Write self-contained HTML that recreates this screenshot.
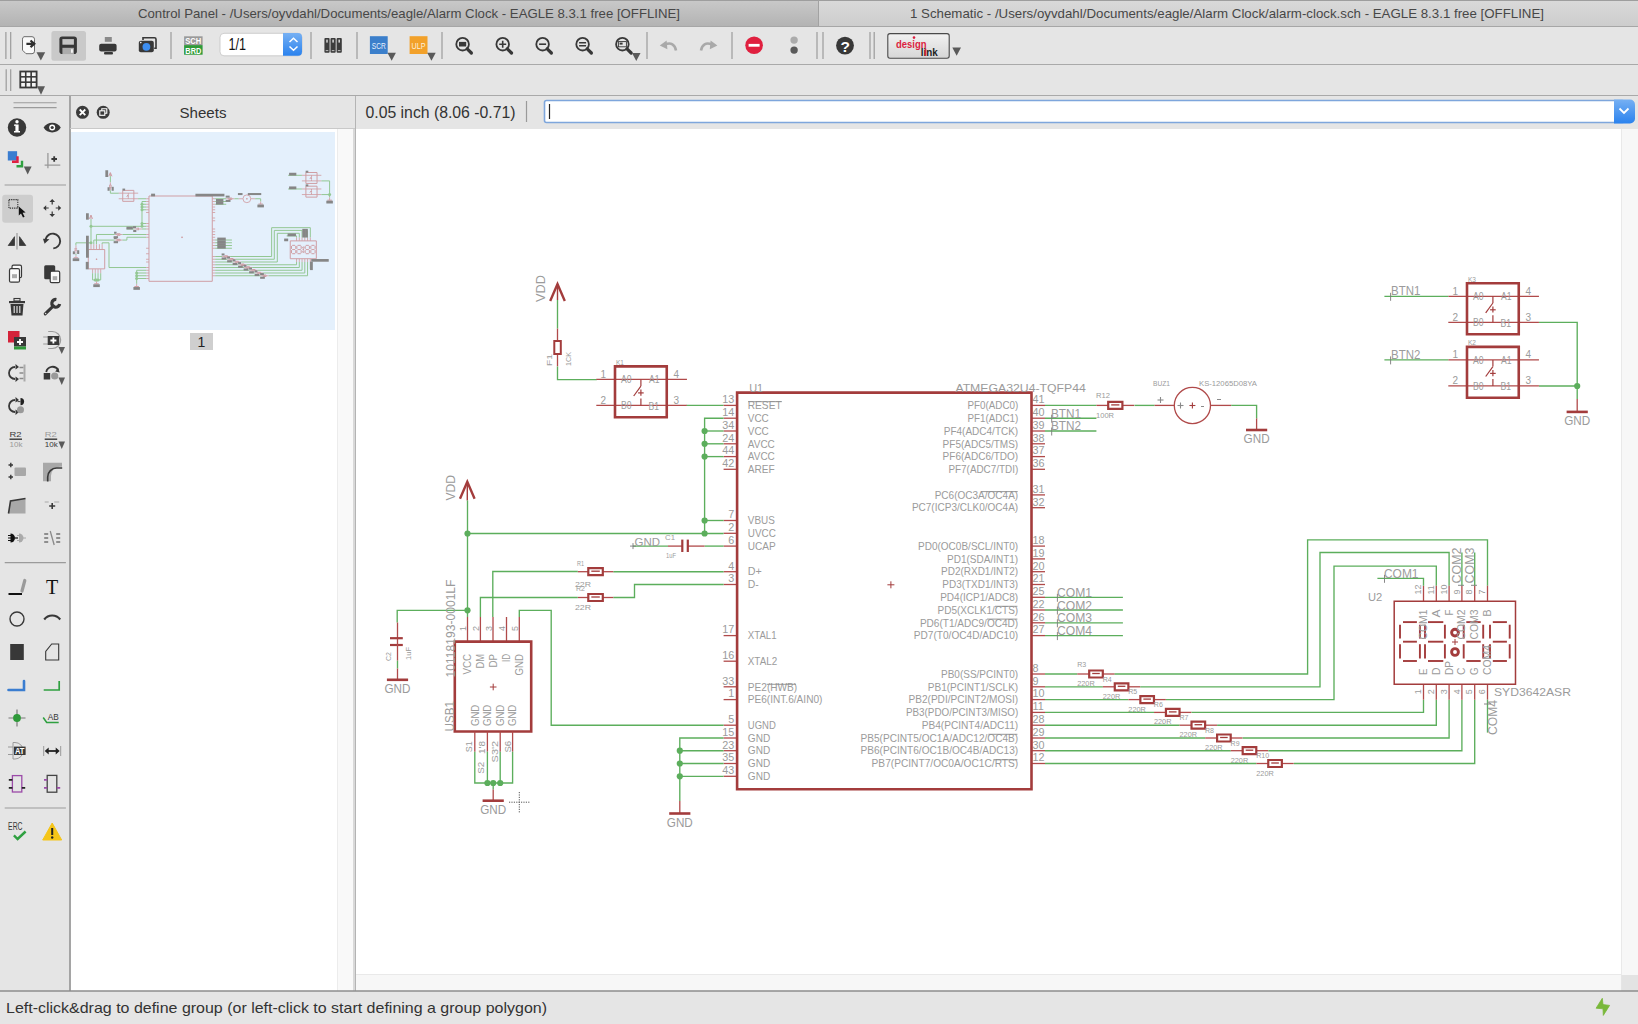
<!DOCTYPE html>
<html><head><meta charset="utf-8"><title>EAGLE</title>
<style>html,body{margin:0;padding:0;width:1638px;height:1024px;overflow:hidden;background:#e5e5e5}
svg{display:block} text{font-family:"Liberation Sans", sans-serif}
.p{opacity:var(--po,1)} .l{opacity:var(--lo,1)}
.thumb{--w:1px;--rc:#cf9ea4;--pc:#d4aab0;--gc:#93c793;--xc:none;--po:0;--lo:0;--jr:7px}</style></head>
<body><svg width="1638" height="1024" viewBox="0 0 1638 1024">
<defs><clipPath id="cv"><rect x="356" y="129" width="1265" height="845"/></clipPath>
<clipPath id="th"><rect x="71" y="132" width="265" height="198"/></clipPath>
<g id="sch">
<path d="M550.20 301.00 L557.50 284.00 L564.80 301.00" fill="none" style="stroke:var(--rc,#a33c3c);stroke-width:var(--w,2.4px)" vector-effect="non-scaling-stroke"/>
<line x1="557.50" y1="284.50" x2="557.50" y2="300.00" style="stroke:var(--rc,#a33c3c);stroke-width:var(--w,1.4px)" vector-effect="non-scaling-stroke"/>
<text class="l" x="545.00" y="302.00" font-size="12" fill="#9b9b9b" text-anchor="start" transform="rotate(-90 545.00 302.00)" textLength="27.0" lengthAdjust="spacingAndGlyphs">VDD</text>
<path d="M557.50 300.00 L557.50 328.60" fill="none" style="stroke:var(--gc,#5cae5c);stroke-width:var(--w,1.35px)" vector-effect="non-scaling-stroke"/>
<line x1="557.50" y1="328.60" x2="557.50" y2="341.00" style="stroke:var(--pc,#b04a4a);stroke-width:var(--w,1.3px)" vector-effect="non-scaling-stroke"/>
<line x1="557.50" y1="354.00" x2="557.50" y2="366.40" style="stroke:var(--pc,#b04a4a);stroke-width:var(--w,1.3px)" vector-effect="non-scaling-stroke"/>
<rect x="554.3" y="341" width="6.5" height="13" fill="none" style="stroke:var(--rc,#a33c3c);stroke-width:var(--w,2px)" vector-effect="non-scaling-stroke"/>
<path d="M557.50 366.40 L557.50 379.60 L596.80 379.60" fill="none" style="stroke:var(--gc,#5cae5c);stroke-width:var(--w,1.35px)" vector-effect="non-scaling-stroke"/>
<text class="l" x="552.00" y="366.00" font-size="7.5" fill="#9b9b9b" text-anchor="start" transform="rotate(-90 552.00 366.00)" textLength="12.0" lengthAdjust="spacingAndGlyphs">F1</text>
<text class="l" x="571.00" y="366.00" font-size="7.5" fill="#9b9b9b" text-anchor="start" transform="rotate(-90 571.00 366.00)" textLength="14.0" lengthAdjust="spacingAndGlyphs">1CK</text>
<line x1="596.30" y1="379.40" x2="686.95" y2="379.40" style="stroke:var(--pc,#b04a4a);stroke-width:var(--w,1.3px)" vector-effect="non-scaling-stroke"/>
<line x1="596.30" y1="405.40" x2="686.95" y2="405.40" style="stroke:var(--pc,#b04a4a);stroke-width:var(--w,1.3px)" vector-effect="non-scaling-stroke"/>
<rect x="615.00" y="366.40" width="51.75" height="50.90" fill="none" style="stroke:var(--rc,#a33c3c);stroke-width:var(--w,2.6px)" vector-effect="non-scaling-stroke"/>
<line x1="640.90" y1="379.40" x2="640.90" y2="386.10" style="stroke:var(--rc,#a33c3c);stroke-width:var(--w,1.2px)" vector-effect="non-scaling-stroke"/>
<line x1="640.90" y1="386.10" x2="633.70" y2="396.00" style="stroke:var(--rc,#a33c3c);stroke-width:var(--w,1.2px)" vector-effect="non-scaling-stroke"/>
<line x1="638.10" y1="392.90" x2="643.70" y2="392.90" style="stroke:var(--rc,#a33c3c);stroke-width:var(--w,1.2px)" vector-effect="non-scaling-stroke"/>
<line x1="640.90" y1="389.60" x2="640.90" y2="395.70" style="stroke:var(--rc,#a33c3c);stroke-width:var(--w,1.2px)" vector-effect="non-scaling-stroke"/>
<line x1="640.90" y1="398.40" x2="640.90" y2="405.40" style="stroke:var(--rc,#a33c3c);stroke-width:var(--w,1.2px)" vector-effect="non-scaling-stroke"/>
<text class="p" x="621.00" y="383.40" font-size="10" fill="#9b9b9b" text-anchor="start" textLength="10.5" lengthAdjust="spacingAndGlyphs">A0</text>
<text class="p" x="649.00" y="383.40" font-size="10" fill="#9b9b9b" text-anchor="start" textLength="10.5" lengthAdjust="spacingAndGlyphs">A1</text>
<text class="p" x="621.00" y="409.40" font-size="10" fill="#9b9b9b" text-anchor="start" textLength="10.5" lengthAdjust="spacingAndGlyphs">B0</text>
<text class="p" x="648.50" y="409.90" font-size="10" fill="#9b9b9b" text-anchor="start" textLength="10.5" lengthAdjust="spacingAndGlyphs">B1</text>
<text class="p" x="600.50" y="377.60" font-size="10" fill="#9b9b9b" text-anchor="start">1</text>
<text class="p" x="600.50" y="403.60" font-size="10" fill="#9b9b9b" text-anchor="start">2</text>
<text class="p" x="673.55" y="377.60" font-size="10" fill="#9b9b9b" text-anchor="start">4</text>
<text class="p" x="673.55" y="403.60" font-size="10" fill="#9b9b9b" text-anchor="start">3</text>
<text class="l" x="616.00" y="364.90" font-size="6.5" fill="#9b9b9b" text-anchor="start" textLength="8.0" lengthAdjust="spacingAndGlyphs">K1</text>
<path d="M686.70 405.40 L723.60 405.40" fill="none" style="stroke:var(--gc,#5cae5c);stroke-width:var(--w,1.35px)" vector-effect="non-scaling-stroke"/>
<line x1="723.60" y1="405.40" x2="737.10" y2="405.40" style="stroke:var(--pc,#b04a4a);stroke-width:var(--w,1.3px)" vector-effect="non-scaling-stroke"/>
<text class="p" x="734.30" y="403.20" font-size="10.8" fill="#9b9b9b" text-anchor="end">13</text>
<text class="p" x="747.80" y="409.10" font-size="10.3" fill="#9b9b9b" text-anchor="start" textLength="33.8" lengthAdjust="spacingAndGlyphs">RESET</text>
<line x1="723.60" y1="418.20" x2="737.10" y2="418.20" style="stroke:var(--pc,#b04a4a);stroke-width:var(--w,1.3px)" vector-effect="non-scaling-stroke"/>
<text class="p" x="734.30" y="416.00" font-size="10.8" fill="#9b9b9b" text-anchor="end">14</text>
<text class="p" x="747.80" y="421.90" font-size="10.3" fill="#9b9b9b" text-anchor="start" textLength="21.0" lengthAdjust="spacingAndGlyphs">VCC</text>
<line x1="723.60" y1="431.00" x2="737.10" y2="431.00" style="stroke:var(--pc,#b04a4a);stroke-width:var(--w,1.3px)" vector-effect="non-scaling-stroke"/>
<text class="p" x="734.30" y="428.80" font-size="10.8" fill="#9b9b9b" text-anchor="end">34</text>
<text class="p" x="747.80" y="434.70" font-size="10.3" fill="#9b9b9b" text-anchor="start" textLength="21.0" lengthAdjust="spacingAndGlyphs">VCC</text>
<line x1="723.60" y1="443.80" x2="737.10" y2="443.80" style="stroke:var(--pc,#b04a4a);stroke-width:var(--w,1.3px)" vector-effect="non-scaling-stroke"/>
<text class="p" x="734.30" y="441.60" font-size="10.8" fill="#9b9b9b" text-anchor="end">24</text>
<text class="p" x="747.80" y="447.50" font-size="10.3" fill="#9b9b9b" text-anchor="start" textLength="27.0" lengthAdjust="spacingAndGlyphs">AVCC</text>
<line x1="723.60" y1="456.60" x2="737.10" y2="456.60" style="stroke:var(--pc,#b04a4a);stroke-width:var(--w,1.3px)" vector-effect="non-scaling-stroke"/>
<text class="p" x="734.30" y="454.40" font-size="10.8" fill="#9b9b9b" text-anchor="end">44</text>
<text class="p" x="747.80" y="460.30" font-size="10.3" fill="#9b9b9b" text-anchor="start" textLength="27.0" lengthAdjust="spacingAndGlyphs">AVCC</text>
<line x1="723.60" y1="469.30" x2="737.10" y2="469.30" style="stroke:var(--pc,#b04a4a);stroke-width:var(--w,1.3px)" vector-effect="non-scaling-stroke"/>
<text class="p" x="734.30" y="467.10" font-size="10.8" fill="#9b9b9b" text-anchor="end">42</text>
<text class="p" x="747.80" y="473.00" font-size="10.3" fill="#9b9b9b" text-anchor="start" textLength="27.0" lengthAdjust="spacingAndGlyphs">AREF</text>
<line x1="723.60" y1="520.50" x2="737.10" y2="520.50" style="stroke:var(--pc,#b04a4a);stroke-width:var(--w,1.3px)" vector-effect="non-scaling-stroke"/>
<text class="p" x="734.30" y="518.30" font-size="10.8" fill="#9b9b9b" text-anchor="end">7</text>
<text class="p" x="747.80" y="524.20" font-size="10.3" fill="#9b9b9b" text-anchor="start" textLength="27.0" lengthAdjust="spacingAndGlyphs">VBUS</text>
<line x1="723.60" y1="533.30" x2="737.10" y2="533.30" style="stroke:var(--pc,#b04a4a);stroke-width:var(--w,1.3px)" vector-effect="non-scaling-stroke"/>
<text class="p" x="734.30" y="531.10" font-size="10.8" fill="#9b9b9b" text-anchor="end">2</text>
<text class="p" x="747.80" y="537.00" font-size="10.3" fill="#9b9b9b" text-anchor="start" textLength="28.0" lengthAdjust="spacingAndGlyphs">UVCC</text>
<line x1="723.60" y1="546.10" x2="737.10" y2="546.10" style="stroke:var(--pc,#b04a4a);stroke-width:var(--w,1.3px)" vector-effect="non-scaling-stroke"/>
<text class="p" x="734.30" y="543.90" font-size="10.8" fill="#9b9b9b" text-anchor="end">6</text>
<text class="p" x="747.80" y="549.80" font-size="10.3" fill="#9b9b9b" text-anchor="start" textLength="28.0" lengthAdjust="spacingAndGlyphs">UCAP</text>
<line x1="723.60" y1="571.70" x2="737.10" y2="571.70" style="stroke:var(--pc,#b04a4a);stroke-width:var(--w,1.3px)" vector-effect="non-scaling-stroke"/>
<text class="p" x="734.30" y="569.50" font-size="10.8" fill="#9b9b9b" text-anchor="end">4</text>
<text class="p" x="747.80" y="575.40" font-size="10.3" fill="#9b9b9b" text-anchor="start" textLength="14.0" lengthAdjust="spacingAndGlyphs">D+</text>
<line x1="723.60" y1="584.50" x2="737.10" y2="584.50" style="stroke:var(--pc,#b04a4a);stroke-width:var(--w,1.3px)" vector-effect="non-scaling-stroke"/>
<text class="p" x="734.30" y="582.30" font-size="10.8" fill="#9b9b9b" text-anchor="end">3</text>
<text class="p" x="747.80" y="588.20" font-size="10.3" fill="#9b9b9b" text-anchor="start" textLength="11.0" lengthAdjust="spacingAndGlyphs">D-</text>
<line x1="723.60" y1="635.60" x2="737.10" y2="635.60" style="stroke:var(--pc,#b04a4a);stroke-width:var(--w,1.3px)" vector-effect="non-scaling-stroke"/>
<text class="p" x="734.30" y="633.40" font-size="10.8" fill="#9b9b9b" text-anchor="end">17</text>
<text class="p" x="747.80" y="639.30" font-size="10.3" fill="#9b9b9b" text-anchor="start" textLength="28.8" lengthAdjust="spacingAndGlyphs">XTAL1</text>
<line x1="723.60" y1="661.20" x2="737.10" y2="661.20" style="stroke:var(--pc,#b04a4a);stroke-width:var(--w,1.3px)" vector-effect="non-scaling-stroke"/>
<text class="p" x="734.30" y="659.00" font-size="10.8" fill="#9b9b9b" text-anchor="end">16</text>
<text class="p" x="747.80" y="664.90" font-size="10.3" fill="#9b9b9b" text-anchor="start" textLength="29.4" lengthAdjust="spacingAndGlyphs">XTAL2</text>
<line x1="723.60" y1="686.80" x2="737.10" y2="686.80" style="stroke:var(--pc,#b04a4a);stroke-width:var(--w,1.3px)" vector-effect="non-scaling-stroke"/>
<text class="p" x="734.30" y="684.60" font-size="10.8" fill="#9b9b9b" text-anchor="end">33</text>
<text class="p" x="747.80" y="690.50" font-size="10.3" fill="#9b9b9b" text-anchor="start" textLength="49.4" lengthAdjust="spacingAndGlyphs">PE2(HWB)</text>
<line x1="723.60" y1="699.60" x2="737.10" y2="699.60" style="stroke:var(--pc,#b04a4a);stroke-width:var(--w,1.3px)" vector-effect="non-scaling-stroke"/>
<text class="p" x="734.30" y="697.40" font-size="10.8" fill="#9b9b9b" text-anchor="end">1</text>
<text class="p" x="747.80" y="703.30" font-size="10.3" fill="#9b9b9b" text-anchor="start" textLength="74.6" lengthAdjust="spacingAndGlyphs">PE6(INT.6/AIN0)</text>
<line x1="723.60" y1="725.20" x2="737.10" y2="725.20" style="stroke:var(--pc,#b04a4a);stroke-width:var(--w,1.3px)" vector-effect="non-scaling-stroke"/>
<text class="p" x="734.30" y="723.00" font-size="10.8" fill="#9b9b9b" text-anchor="end">5</text>
<text class="p" x="747.80" y="728.90" font-size="10.3" fill="#9b9b9b" text-anchor="start" textLength="28.0" lengthAdjust="spacingAndGlyphs">UGND</text>
<line x1="723.60" y1="738.00" x2="737.10" y2="738.00" style="stroke:var(--pc,#b04a4a);stroke-width:var(--w,1.3px)" vector-effect="non-scaling-stroke"/>
<text class="p" x="734.30" y="735.80" font-size="10.8" fill="#9b9b9b" text-anchor="end">15</text>
<text class="p" x="747.80" y="741.70" font-size="10.3" fill="#9b9b9b" text-anchor="start" textLength="22.4" lengthAdjust="spacingAndGlyphs">GND</text>
<line x1="723.60" y1="750.70" x2="737.10" y2="750.70" style="stroke:var(--pc,#b04a4a);stroke-width:var(--w,1.3px)" vector-effect="non-scaling-stroke"/>
<text class="p" x="734.30" y="748.50" font-size="10.8" fill="#9b9b9b" text-anchor="end">23</text>
<text class="p" x="747.80" y="754.40" font-size="10.3" fill="#9b9b9b" text-anchor="start" textLength="22.4" lengthAdjust="spacingAndGlyphs">GND</text>
<line x1="723.60" y1="763.50" x2="737.10" y2="763.50" style="stroke:var(--pc,#b04a4a);stroke-width:var(--w,1.3px)" vector-effect="non-scaling-stroke"/>
<text class="p" x="734.30" y="761.30" font-size="10.8" fill="#9b9b9b" text-anchor="end">35</text>
<text class="p" x="747.80" y="767.20" font-size="10.3" fill="#9b9b9b" text-anchor="start" textLength="22.4" lengthAdjust="spacingAndGlyphs">GND</text>
<line x1="723.60" y1="776.30" x2="737.10" y2="776.30" style="stroke:var(--pc,#b04a4a);stroke-width:var(--w,1.3px)" vector-effect="non-scaling-stroke"/>
<text class="p" x="734.30" y="774.10" font-size="10.8" fill="#9b9b9b" text-anchor="end">43</text>
<text class="p" x="747.80" y="780.00" font-size="10.3" fill="#9b9b9b" text-anchor="start" textLength="22.4" lengthAdjust="spacingAndGlyphs">GND</text>
<line x1="1031.50" y1="405.40" x2="1045.00" y2="405.40" style="stroke:var(--pc,#b04a4a);stroke-width:var(--w,1.3px)" vector-effect="non-scaling-stroke"/>
<text class="p" x="1032.60" y="403.20" font-size="10.8" fill="#9b9b9b" text-anchor="start">41</text>
<text class="p" x="1018.20" y="409.10" font-size="10.3" fill="#9b9b9b" text-anchor="end" textLength="50.7" lengthAdjust="spacingAndGlyphs">PF0(ADC0)</text>
<line x1="1031.50" y1="418.20" x2="1045.00" y2="418.20" style="stroke:var(--pc,#b04a4a);stroke-width:var(--w,1.3px)" vector-effect="non-scaling-stroke"/>
<text class="p" x="1032.60" y="416.00" font-size="10.8" fill="#9b9b9b" text-anchor="start">40</text>
<text class="p" x="1018.20" y="421.90" font-size="10.3" fill="#9b9b9b" text-anchor="end" textLength="50.7" lengthAdjust="spacingAndGlyphs">PF1(ADC1)</text>
<line x1="1031.50" y1="431.00" x2="1045.00" y2="431.00" style="stroke:var(--pc,#b04a4a);stroke-width:var(--w,1.3px)" vector-effect="non-scaling-stroke"/>
<text class="p" x="1032.60" y="428.80" font-size="10.8" fill="#9b9b9b" text-anchor="start">39</text>
<text class="p" x="1018.20" y="434.70" font-size="10.3" fill="#9b9b9b" text-anchor="end" textLength="74.4" lengthAdjust="spacingAndGlyphs">PF4(ADC4/TCK)</text>
<line x1="1031.50" y1="443.80" x2="1045.00" y2="443.80" style="stroke:var(--pc,#b04a4a);stroke-width:var(--w,1.3px)" vector-effect="non-scaling-stroke"/>
<text class="p" x="1032.60" y="441.60" font-size="10.8" fill="#9b9b9b" text-anchor="start">38</text>
<text class="p" x="1018.20" y="447.50" font-size="10.3" fill="#9b9b9b" text-anchor="end" textLength="75.6" lengthAdjust="spacingAndGlyphs">PF5(ADC5/TMS)</text>
<line x1="1031.50" y1="456.60" x2="1045.00" y2="456.60" style="stroke:var(--pc,#b04a4a);stroke-width:var(--w,1.3px)" vector-effect="non-scaling-stroke"/>
<text class="p" x="1032.60" y="454.40" font-size="10.8" fill="#9b9b9b" text-anchor="start">37</text>
<text class="p" x="1018.20" y="460.30" font-size="10.3" fill="#9b9b9b" text-anchor="end" textLength="75.6" lengthAdjust="spacingAndGlyphs">PF6(ADC6/TDO)</text>
<line x1="1031.50" y1="469.30" x2="1045.00" y2="469.30" style="stroke:var(--pc,#b04a4a);stroke-width:var(--w,1.3px)" vector-effect="non-scaling-stroke"/>
<text class="p" x="1032.60" y="467.10" font-size="10.8" fill="#9b9b9b" text-anchor="start">36</text>
<text class="p" x="1018.20" y="473.00" font-size="10.3" fill="#9b9b9b" text-anchor="end" textLength="69.7" lengthAdjust="spacingAndGlyphs">PF7(ADC7/TDI)</text>
<line x1="1031.50" y1="494.90" x2="1045.00" y2="494.90" style="stroke:var(--pc,#b04a4a);stroke-width:var(--w,1.3px)" vector-effect="non-scaling-stroke"/>
<text class="p" x="1032.60" y="492.70" font-size="10.8" fill="#9b9b9b" text-anchor="start">31</text>
<text class="p" x="1018.20" y="498.60" font-size="10.3" fill="#9b9b9b" text-anchor="end" textLength="83.5" lengthAdjust="spacingAndGlyphs">PC6(OC3A/OC4A)</text>
<line x1="1031.50" y1="507.70" x2="1045.00" y2="507.70" style="stroke:var(--pc,#b04a4a);stroke-width:var(--w,1.3px)" vector-effect="non-scaling-stroke"/>
<text class="p" x="1032.60" y="505.50" font-size="10.8" fill="#9b9b9b" text-anchor="start">32</text>
<text class="p" x="1018.20" y="511.40" font-size="10.3" fill="#9b9b9b" text-anchor="end" textLength="106.3" lengthAdjust="spacingAndGlyphs">PC7(ICP3/CLK0/OC4A)</text>
<line x1="1031.50" y1="546.10" x2="1045.00" y2="546.10" style="stroke:var(--pc,#b04a4a);stroke-width:var(--w,1.3px)" vector-effect="non-scaling-stroke"/>
<text class="p" x="1032.60" y="543.90" font-size="10.8" fill="#9b9b9b" text-anchor="start">18</text>
<text class="p" x="1018.20" y="549.80" font-size="10.3" fill="#9b9b9b" text-anchor="end" textLength="100.2" lengthAdjust="spacingAndGlyphs">PD0(OC0B/SCL/INT0)</text>
<line x1="1031.50" y1="558.90" x2="1045.00" y2="558.90" style="stroke:var(--pc,#b04a4a);stroke-width:var(--w,1.3px)" vector-effect="non-scaling-stroke"/>
<text class="p" x="1032.60" y="556.70" font-size="10.8" fill="#9b9b9b" text-anchor="start">19</text>
<text class="p" x="1018.20" y="562.60" font-size="10.3" fill="#9b9b9b" text-anchor="end" textLength="71.2" lengthAdjust="spacingAndGlyphs">PD1(SDA/INT1)</text>
<line x1="1031.50" y1="571.70" x2="1045.00" y2="571.70" style="stroke:var(--pc,#b04a4a);stroke-width:var(--w,1.3px)" vector-effect="non-scaling-stroke"/>
<text class="p" x="1032.60" y="569.50" font-size="10.8" fill="#9b9b9b" text-anchor="start">20</text>
<text class="p" x="1018.20" y="575.40" font-size="10.3" fill="#9b9b9b" text-anchor="end" textLength="77.2" lengthAdjust="spacingAndGlyphs">PD2(RXD1/INT2)</text>
<line x1="1031.50" y1="584.50" x2="1045.00" y2="584.50" style="stroke:var(--pc,#b04a4a);stroke-width:var(--w,1.3px)" vector-effect="non-scaling-stroke"/>
<text class="p" x="1032.60" y="582.30" font-size="10.8" fill="#9b9b9b" text-anchor="start">21</text>
<text class="p" x="1018.20" y="588.20" font-size="10.3" fill="#9b9b9b" text-anchor="end" textLength="75.9" lengthAdjust="spacingAndGlyphs">PD3(TXD1/INT3)</text>
<line x1="1031.50" y1="597.30" x2="1045.00" y2="597.30" style="stroke:var(--pc,#b04a4a);stroke-width:var(--w,1.3px)" vector-effect="non-scaling-stroke"/>
<text class="p" x="1032.60" y="595.10" font-size="10.8" fill="#9b9b9b" text-anchor="start">25</text>
<text class="p" x="1018.20" y="601.00" font-size="10.3" fill="#9b9b9b" text-anchor="end" textLength="78.0" lengthAdjust="spacingAndGlyphs">PD4(ICP1/ADC8)</text>
<line x1="1031.50" y1="610.00" x2="1045.00" y2="610.00" style="stroke:var(--pc,#b04a4a);stroke-width:var(--w,1.3px)" vector-effect="non-scaling-stroke"/>
<text class="p" x="1032.60" y="607.80" font-size="10.8" fill="#9b9b9b" text-anchor="start">22</text>
<text class="p" x="1018.20" y="613.70" font-size="10.3" fill="#9b9b9b" text-anchor="end" textLength="80.7" lengthAdjust="spacingAndGlyphs">PD5(XCLK1/CTS)</text>
<line x1="1031.50" y1="622.80" x2="1045.00" y2="622.80" style="stroke:var(--pc,#b04a4a);stroke-width:var(--w,1.3px)" vector-effect="non-scaling-stroke"/>
<text class="p" x="1032.60" y="620.60" font-size="10.8" fill="#9b9b9b" text-anchor="start">26</text>
<text class="p" x="1018.20" y="626.50" font-size="10.3" fill="#9b9b9b" text-anchor="end" textLength="98.3" lengthAdjust="spacingAndGlyphs">PD6(T1/ADC9/OC4D)</text>
<line x1="1031.50" y1="635.60" x2="1045.00" y2="635.60" style="stroke:var(--pc,#b04a4a);stroke-width:var(--w,1.3px)" vector-effect="non-scaling-stroke"/>
<text class="p" x="1032.60" y="633.40" font-size="10.8" fill="#9b9b9b" text-anchor="start">27</text>
<text class="p" x="1018.20" y="639.30" font-size="10.3" fill="#9b9b9b" text-anchor="end" textLength="104.4" lengthAdjust="spacingAndGlyphs">PD7(T0/OC4D/ADC10)</text>
<line x1="1031.50" y1="674.00" x2="1045.00" y2="674.00" style="stroke:var(--pc,#b04a4a);stroke-width:var(--w,1.3px)" vector-effect="non-scaling-stroke"/>
<text class="p" x="1032.60" y="671.80" font-size="10.8" fill="#9b9b9b" text-anchor="start">8</text>
<text class="p" x="1018.20" y="677.70" font-size="10.3" fill="#9b9b9b" text-anchor="end" textLength="77.2" lengthAdjust="spacingAndGlyphs">PB0(SS/PCINT0)</text>
<line x1="1031.50" y1="686.80" x2="1045.00" y2="686.80" style="stroke:var(--pc,#b04a4a);stroke-width:var(--w,1.3px)" vector-effect="non-scaling-stroke"/>
<text class="p" x="1032.60" y="684.60" font-size="10.8" fill="#9b9b9b" text-anchor="start">9</text>
<text class="p" x="1018.20" y="690.50" font-size="10.3" fill="#9b9b9b" text-anchor="end" textLength="90.4" lengthAdjust="spacingAndGlyphs">PB1(PCINT1/SCLK)</text>
<line x1="1031.50" y1="699.60" x2="1045.00" y2="699.60" style="stroke:var(--pc,#b04a4a);stroke-width:var(--w,1.3px)" vector-effect="non-scaling-stroke"/>
<text class="p" x="1032.60" y="697.40" font-size="10.8" fill="#9b9b9b" text-anchor="start">10</text>
<text class="p" x="1018.20" y="703.30" font-size="10.3" fill="#9b9b9b" text-anchor="end" textLength="109.7" lengthAdjust="spacingAndGlyphs">PB2(PDI/PCINT2/MOSI)</text>
<line x1="1031.50" y1="712.40" x2="1045.00" y2="712.40" style="stroke:var(--pc,#b04a4a);stroke-width:var(--w,1.3px)" vector-effect="non-scaling-stroke"/>
<text class="p" x="1032.60" y="710.20" font-size="10.8" fill="#9b9b9b" text-anchor="start">11</text>
<text class="p" x="1018.20" y="716.10" font-size="10.3" fill="#9b9b9b" text-anchor="end" textLength="112.3" lengthAdjust="spacingAndGlyphs">PB3(PDO/PCINT3/MISO)</text>
<line x1="1031.50" y1="725.20" x2="1045.00" y2="725.20" style="stroke:var(--pc,#b04a4a);stroke-width:var(--w,1.3px)" vector-effect="non-scaling-stroke"/>
<text class="p" x="1032.60" y="723.00" font-size="10.8" fill="#9b9b9b" text-anchor="start">28</text>
<text class="p" x="1018.20" y="728.90" font-size="10.3" fill="#9b9b9b" text-anchor="end" textLength="96.5" lengthAdjust="spacingAndGlyphs">PB4(PCINT4/ADC11)</text>
<line x1="1031.50" y1="738.00" x2="1045.00" y2="738.00" style="stroke:var(--pc,#b04a4a);stroke-width:var(--w,1.3px)" vector-effect="non-scaling-stroke"/>
<text class="p" x="1032.60" y="735.80" font-size="10.8" fill="#9b9b9b" text-anchor="start">29</text>
<text class="p" x="1018.20" y="741.70" font-size="10.3" fill="#9b9b9b" text-anchor="end" textLength="157.7" lengthAdjust="spacingAndGlyphs">PB5(PCINT5/OC1A/ADC12/OC4B)</text>
<line x1="1031.50" y1="750.70" x2="1045.00" y2="750.70" style="stroke:var(--pc,#b04a4a);stroke-width:var(--w,1.3px)" vector-effect="non-scaling-stroke"/>
<text class="p" x="1032.60" y="748.50" font-size="10.8" fill="#9b9b9b" text-anchor="start">30</text>
<text class="p" x="1018.20" y="754.40" font-size="10.3" fill="#9b9b9b" text-anchor="end" textLength="157.7" lengthAdjust="spacingAndGlyphs">PB6(PCINT6/OC1B/OC4B/ADC13)</text>
<line x1="1031.50" y1="763.50" x2="1045.00" y2="763.50" style="stroke:var(--pc,#b04a4a);stroke-width:var(--w,1.3px)" vector-effect="non-scaling-stroke"/>
<text class="p" x="1032.60" y="761.30" font-size="10.8" fill="#9b9b9b" text-anchor="start">12</text>
<text class="p" x="1018.20" y="767.20" font-size="10.3" fill="#9b9b9b" text-anchor="end" textLength="146.6" lengthAdjust="spacingAndGlyphs">PB7(PCINT7/OC0A/OC1C/RTS)</text>
<rect x="737.10" y="392.60" width="294.40" height="396.70" fill="none" style="stroke:var(--rc,#a33c3c);stroke-width:var(--w,2.6px)" vector-effect="non-scaling-stroke"/>
<text class="l" x="749.20" y="392.00" font-size="11.3" fill="#9b9b9b" text-anchor="start" textLength="14.0" lengthAdjust="spacingAndGlyphs">U1</text>
<text class="l" x="955.40" y="392.40" font-size="11.3" fill="#9b9b9b" text-anchor="start" textLength="130.4" lengthAdjust="spacingAndGlyphs">ATMEGA32U4-TQFP44</text>
<line x1="887.40" y1="584.80" x2="894.40" y2="584.80" style="stroke:var(--rc,#a33c3c);stroke-width:var(--w,1px)" vector-effect="non-scaling-stroke"/>
<line x1="890.90" y1="581.30" x2="890.90" y2="588.30" style="stroke:var(--rc,#a33c3c);stroke-width:var(--w,1px)" vector-effect="non-scaling-stroke"/>
<line x1="748.00" y1="401.70" x2="781.80" y2="401.70" style="stroke:var(--xc,#8d8d8d);stroke-width:var(--w,0.9px)" vector-effect="non-scaling-stroke"/>
<line x1="766.70" y1="684.30" x2="796.00" y2="684.30" style="stroke:var(--xc,#8d8d8d);stroke-width:var(--w,0.9px)" vector-effect="non-scaling-stroke"/>
<line x1="981.20" y1="491.60" x2="1017.70" y2="491.60" style="stroke:var(--xc,#8d8d8d);stroke-width:var(--w,0.9px)" vector-effect="non-scaling-stroke"/>
<line x1="995.00" y1="606.30" x2="1017.40" y2="606.30" style="stroke:var(--xc,#8d8d8d);stroke-width:var(--w,0.9px)" vector-effect="non-scaling-stroke"/>
<line x1="987.00" y1="619.10" x2="1017.40" y2="619.10" style="stroke:var(--xc,#8d8d8d);stroke-width:var(--w,0.9px)" vector-effect="non-scaling-stroke"/>
<line x1="988.40" y1="734.30" x2="1017.40" y2="734.30" style="stroke:var(--xc,#8d8d8d);stroke-width:var(--w,0.9px)" vector-effect="non-scaling-stroke"/>
<line x1="993.70" y1="759.80" x2="1017.40" y2="759.80" style="stroke:var(--xc,#8d8d8d);stroke-width:var(--w,0.9px)" vector-effect="non-scaling-stroke"/>
<path d="M723.60 418.20 L704.60 418.20 L704.60 533.30" fill="none" style="stroke:var(--gc,#5cae5c);stroke-width:var(--w,1.35px)" vector-effect="non-scaling-stroke"/>
<path d="M704.60 431.00 L723.60 431.00" fill="none" style="stroke:var(--gc,#5cae5c);stroke-width:var(--w,1.35px)" vector-effect="non-scaling-stroke"/>
<circle cx="704.60" cy="431.00" r="3.1" style="fill:var(--gc,#5cae5c);r:var(--jr,3.1px)"/>
<path d="M704.60 443.80 L723.60 443.80" fill="none" style="stroke:var(--gc,#5cae5c);stroke-width:var(--w,1.35px)" vector-effect="non-scaling-stroke"/>
<circle cx="704.60" cy="443.80" r="3.1" style="fill:var(--gc,#5cae5c);r:var(--jr,3.1px)"/>
<path d="M704.60 456.60 L723.60 456.60" fill="none" style="stroke:var(--gc,#5cae5c);stroke-width:var(--w,1.35px)" vector-effect="non-scaling-stroke"/>
<circle cx="704.60" cy="456.60" r="3.1" style="fill:var(--gc,#5cae5c);r:var(--jr,3.1px)"/>
<path d="M704.60 520.50 L723.60 520.50" fill="none" style="stroke:var(--gc,#5cae5c);stroke-width:var(--w,1.35px)" vector-effect="non-scaling-stroke"/>
<circle cx="704.60" cy="520.50" r="3.1" style="fill:var(--gc,#5cae5c);r:var(--jr,3.1px)"/>
<path d="M467.50 533.50 L723.60 533.50" fill="none" style="stroke:var(--gc,#5cae5c);stroke-width:var(--w,1.35px)" vector-effect="non-scaling-stroke"/>
<circle cx="704.60" cy="533.50" r="3.1" style="fill:var(--gc,#5cae5c);r:var(--jr,3.1px)"/>
<circle cx="467.50" cy="533.50" r="3.1" style="fill:var(--gc,#5cae5c);r:var(--jr,3.1px)"/>
<path d="M704.60 546.10 L723.60 546.10" fill="none" style="stroke:var(--gc,#5cae5c);stroke-width:var(--w,1.35px)" vector-effect="non-scaling-stroke"/>
<line x1="668.00" y1="546.10" x2="682.30" y2="546.10" style="stroke:var(--pc,#b04a4a);stroke-width:var(--w,1.3px)" vector-effect="non-scaling-stroke"/>
<line x1="687.80" y1="546.10" x2="704.60" y2="546.10" style="stroke:var(--pc,#b04a4a);stroke-width:var(--w,1.3px)" vector-effect="non-scaling-stroke"/>
<line x1="682.30" y1="539.60" x2="682.30" y2="552.00" style="stroke:var(--rc,#a33c3c);stroke-width:var(--w,2.2px)" vector-effect="non-scaling-stroke"/>
<line x1="687.80" y1="539.60" x2="687.80" y2="552.00" style="stroke:var(--rc,#a33c3c);stroke-width:var(--w,2.2px)" vector-effect="non-scaling-stroke"/>
<path d="M633.00 546.10 L668.00 546.10" fill="none" style="stroke:var(--gc,#5cae5c);stroke-width:var(--w,1.35px)" vector-effect="non-scaling-stroke"/>
<text class="l" x="634.50" y="545.80" font-size="11.5" fill="#9b9b9b" text-anchor="start" textLength="25.5" lengthAdjust="spacingAndGlyphs">GND</text>
<line x1="630.00" y1="546.10" x2="636.00" y2="546.10" style="stroke:var(--xc,#7a7a7a);stroke-width:var(--w,0.9px)" vector-effect="non-scaling-stroke"/>
<line x1="633.00" y1="543.10" x2="633.00" y2="549.10" style="stroke:var(--xc,#7a7a7a);stroke-width:var(--w,0.9px)" vector-effect="non-scaling-stroke"/>
<text class="l" x="665.00" y="540.00" font-size="7" fill="#9b9b9b" text-anchor="start" textLength="10.0" lengthAdjust="spacingAndGlyphs">C1</text>
<text class="l" x="666.00" y="558.00" font-size="7" fill="#9b9b9b" text-anchor="start" textLength="10.0" lengthAdjust="spacingAndGlyphs">1uF</text>
<path d="M723.60 571.70 L613.30 571.70" fill="none" style="stroke:var(--gc,#5cae5c);stroke-width:var(--w,1.35px)" vector-effect="non-scaling-stroke"/>
<line x1="577.80" y1="571.70" x2="588.30" y2="571.70" style="stroke:var(--pc,#b04a4a);stroke-width:var(--w,1.3px)" vector-effect="non-scaling-stroke"/>
<line x1="602.80" y1="571.70" x2="613.30" y2="571.70" style="stroke:var(--pc,#b04a4a);stroke-width:var(--w,1.3px)" vector-effect="non-scaling-stroke"/>
<rect x="588.30" y="568.20" width="14.50" height="7.00" fill="none" style="stroke:var(--rc,#a33c3c);stroke-width:var(--w,2.2px)" vector-effect="non-scaling-stroke"/>
<line x1="591.30" y1="571.20" x2="599.80" y2="571.20" style="stroke:var(--rc,#a33c3c);stroke-width:var(--w,1.3px)" vector-effect="non-scaling-stroke"/>
<path d="M577.80 571.50 L492.80 571.50 L492.80 617.00" fill="none" style="stroke:var(--gc,#5cae5c);stroke-width:var(--w,1.35px)" vector-effect="non-scaling-stroke"/>
<text class="l" x="577.00" y="566.00" font-size="7" fill="#9b9b9b" text-anchor="start" textLength="7.0" lengthAdjust="spacingAndGlyphs">R1</text>
<text class="l" x="575.00" y="587.00" font-size="7.5" fill="#9b9b9b" text-anchor="start" textLength="16.0" lengthAdjust="spacingAndGlyphs">22R</text>
<path d="M723.60 584.50 L634.50 584.50 L634.50 597.50 L613.30 597.50" fill="none" style="stroke:var(--gc,#5cae5c);stroke-width:var(--w,1.35px)" vector-effect="non-scaling-stroke"/>
<line x1="577.80" y1="597.50" x2="588.30" y2="597.50" style="stroke:var(--pc,#b04a4a);stroke-width:var(--w,1.3px)" vector-effect="non-scaling-stroke"/>
<line x1="602.80" y1="597.50" x2="613.30" y2="597.50" style="stroke:var(--pc,#b04a4a);stroke-width:var(--w,1.3px)" vector-effect="non-scaling-stroke"/>
<rect x="588.30" y="594.00" width="14.50" height="7.00" fill="none" style="stroke:var(--rc,#a33c3c);stroke-width:var(--w,2.2px)" vector-effect="non-scaling-stroke"/>
<line x1="591.30" y1="597.00" x2="599.80" y2="597.00" style="stroke:var(--rc,#a33c3c);stroke-width:var(--w,1.3px)" vector-effect="non-scaling-stroke"/>
<path d="M577.80 597.50 L480.40 597.50 L480.40 617.00" fill="none" style="stroke:var(--gc,#5cae5c);stroke-width:var(--w,1.35px)" vector-effect="non-scaling-stroke"/>
<text class="l" x="576.00" y="590.50" font-size="7" fill="#9b9b9b" text-anchor="start" textLength="9.0" lengthAdjust="spacingAndGlyphs">R2</text>
<text class="l" x="575.00" y="610.00" font-size="7.5" fill="#9b9b9b" text-anchor="start" textLength="16.0" lengthAdjust="spacingAndGlyphs">22R</text>
<path d="M460.00 498.70 L467.30 481.70 L474.60 498.70" fill="none" style="stroke:var(--rc,#a33c3c);stroke-width:var(--w,2.4px)" vector-effect="non-scaling-stroke"/>
<line x1="467.30" y1="482.20" x2="467.30" y2="500.40" style="stroke:var(--rc,#a33c3c);stroke-width:var(--w,1.4px)" vector-effect="non-scaling-stroke"/>
<text class="l" x="455.00" y="500.50" font-size="12" fill="#9b9b9b" text-anchor="start" transform="rotate(-90 455.00 500.50)" textLength="25.5" lengthAdjust="spacingAndGlyphs">VDD</text>
<path d="M467.50 500.40 L467.50 617.00" fill="none" style="stroke:var(--gc,#5cae5c);stroke-width:var(--w,1.35px)" vector-effect="non-scaling-stroke"/>
<circle cx="467.50" cy="610.30" r="3.1" style="fill:var(--gc,#5cae5c);r:var(--jr,3.1px)"/>
<path d="M467.50 610.30 L397.20 610.30 L397.20 622.50" fill="none" style="stroke:var(--gc,#5cae5c);stroke-width:var(--w,1.35px)" vector-effect="non-scaling-stroke"/>
<path d="M519.30 617.00 L519.30 610.30 L551.20 610.30 L551.20 725.20 L723.60 725.20" fill="none" style="stroke:var(--gc,#5cae5c);stroke-width:var(--w,1.35px)" vector-effect="non-scaling-stroke"/>
<line x1="467.50" y1="617.00" x2="467.50" y2="641.60" style="stroke:var(--pc,#b04a4a);stroke-width:var(--w,1.3px)" vector-effect="non-scaling-stroke"/>
<line x1="480.40" y1="617.00" x2="480.40" y2="641.60" style="stroke:var(--pc,#b04a4a);stroke-width:var(--w,1.3px)" vector-effect="non-scaling-stroke"/>
<line x1="493.00" y1="617.00" x2="493.00" y2="641.60" style="stroke:var(--pc,#b04a4a);stroke-width:var(--w,1.3px)" vector-effect="non-scaling-stroke"/>
<line x1="506.50" y1="617.00" x2="506.50" y2="641.60" style="stroke:var(--pc,#b04a4a);stroke-width:var(--w,1.3px)" vector-effect="non-scaling-stroke"/>
<line x1="519.30" y1="617.00" x2="519.30" y2="641.60" style="stroke:var(--pc,#b04a4a);stroke-width:var(--w,1.3px)" vector-effect="non-scaling-stroke"/>
<text class="p" x="466.00" y="631.00" font-size="9" fill="#9b9b9b" text-anchor="start" transform="rotate(-90 466.00 631.00)">1</text>
<text class="p" x="478.90" y="631.00" font-size="9" fill="#9b9b9b" text-anchor="start" transform="rotate(-90 478.90 631.00)">2</text>
<text class="p" x="491.50" y="631.00" font-size="9" fill="#9b9b9b" text-anchor="start" transform="rotate(-90 491.50 631.00)">3</text>
<text class="p" x="505.00" y="631.00" font-size="9" fill="#9b9b9b" text-anchor="start" transform="rotate(-90 505.00 631.00)">4</text>
<text class="p" x="517.80" y="631.00" font-size="9" fill="#9b9b9b" text-anchor="start" transform="rotate(-90 517.80 631.00)">5</text>
<rect x="454.80" y="641.60" width="76.40" height="89.90" fill="none" style="stroke:var(--rc,#a33c3c);stroke-width:var(--w,2.6px)" vector-effect="non-scaling-stroke"/>
<text class="p" x="471.20" y="654.00" font-size="10" fill="#9b9b9b" text-anchor="end" transform="rotate(-90 471.20 654.00)" textLength="20.5" lengthAdjust="spacingAndGlyphs">VCC</text>
<text class="p" x="484.10" y="654.00" font-size="10" fill="#9b9b9b" text-anchor="end" transform="rotate(-90 484.10 654.00)" textLength="14.5" lengthAdjust="spacingAndGlyphs">DM</text>
<text class="p" x="496.70" y="654.00" font-size="10" fill="#9b9b9b" text-anchor="end" transform="rotate(-90 496.70 654.00)" textLength="13.5" lengthAdjust="spacingAndGlyphs">DP</text>
<text class="p" x="510.20" y="654.00" font-size="10" fill="#9b9b9b" text-anchor="end" transform="rotate(-90 510.20 654.00)" textLength="8.0" lengthAdjust="spacingAndGlyphs">ID</text>
<text class="p" x="523.00" y="654.00" font-size="10" fill="#9b9b9b" text-anchor="end" transform="rotate(-90 523.00 654.00)" textLength="21.5" lengthAdjust="spacingAndGlyphs">GND</text>
<text class="p" x="478.50" y="726.00" font-size="10" fill="#9b9b9b" text-anchor="start" transform="rotate(-90 478.50 726.00)" textLength="21.3" lengthAdjust="spacingAndGlyphs">GND</text>
<line x1="474.80" y1="731.50" x2="474.80" y2="751.70" style="stroke:var(--pc,#b04a4a);stroke-width:var(--w,1.3px)" vector-effect="non-scaling-stroke"/>
<text class="p" x="491.10" y="726.00" font-size="10" fill="#9b9b9b" text-anchor="start" transform="rotate(-90 491.10 726.00)" textLength="21.3" lengthAdjust="spacingAndGlyphs">GND</text>
<line x1="487.40" y1="731.50" x2="487.40" y2="751.70" style="stroke:var(--pc,#b04a4a);stroke-width:var(--w,1.3px)" vector-effect="non-scaling-stroke"/>
<text class="p" x="503.90" y="726.00" font-size="10" fill="#9b9b9b" text-anchor="start" transform="rotate(-90 503.90 726.00)" textLength="21.3" lengthAdjust="spacingAndGlyphs">GND</text>
<line x1="500.20" y1="731.50" x2="500.20" y2="751.70" style="stroke:var(--pc,#b04a4a);stroke-width:var(--w,1.3px)" vector-effect="non-scaling-stroke"/>
<text class="p" x="516.30" y="726.00" font-size="10" fill="#9b9b9b" text-anchor="start" transform="rotate(-90 516.30 726.00)" textLength="21.3" lengthAdjust="spacingAndGlyphs">GND</text>
<line x1="512.60" y1="731.50" x2="512.60" y2="751.70" style="stroke:var(--pc,#b04a4a);stroke-width:var(--w,1.3px)" vector-effect="non-scaling-stroke"/>
<line x1="489.90" y1="687.00" x2="496.50" y2="687.00" style="stroke:var(--rc,#a33c3c);stroke-width:var(--w,1px)" vector-effect="non-scaling-stroke"/>
<line x1="493.20" y1="683.70" x2="493.20" y2="690.30" style="stroke:var(--rc,#a33c3c);stroke-width:var(--w,1px)" vector-effect="non-scaling-stroke"/>
<text class="l" x="455.00" y="677.50" font-size="12" fill="#9b9b9b" text-anchor="start" transform="rotate(-90 455.00 677.50)" textLength="98.0" lengthAdjust="spacingAndGlyphs">10118193-0001LF</text>
<text class="l" x="454.00" y="731.50" font-size="12" fill="#9b9b9b" text-anchor="start" transform="rotate(-90 454.00 731.50)" textLength="30.4" lengthAdjust="spacingAndGlyphs">USB1</text>
<text class="p" x="472.20" y="752.20" font-size="9" fill="#9b9b9b" text-anchor="start" transform="rotate(-90 472.20 752.20)" textLength="11.0" lengthAdjust="spacingAndGlyphs">S1</text>
<text class="p" x="484.50" y="754.00" font-size="9" fill="#9b9b9b" text-anchor="start" transform="rotate(-90 484.50 754.00)" textLength="13.0" lengthAdjust="spacingAndGlyphs">1'8</text>
<text class="p" x="484.50" y="773.80" font-size="9" fill="#9b9b9b" text-anchor="start" transform="rotate(-90 484.50 773.80)" textLength="12.0" lengthAdjust="spacingAndGlyphs">S2</text>
<text class="p" x="498.00" y="762.40" font-size="9" fill="#9b9b9b" text-anchor="start" transform="rotate(-90 498.00 762.40)" textLength="21.6" lengthAdjust="spacingAndGlyphs">S3'2</text>
<text class="p" x="511.50" y="752.60" font-size="9" fill="#9b9b9b" text-anchor="start" transform="rotate(-90 511.50 752.60)" textLength="11.8" lengthAdjust="spacingAndGlyphs">S6</text>
<path d="M474.80 751.70 L474.80 783.00 L512.60 783.00 L512.60 751.70" fill="none" style="stroke:var(--gc,#5cae5c);stroke-width:var(--w,1.35px)" vector-effect="non-scaling-stroke"/>
<path d="M487.40 751.70 L487.40 783.00" fill="none" style="stroke:var(--gc,#5cae5c);stroke-width:var(--w,1.35px)" vector-effect="non-scaling-stroke"/>
<path d="M500.20 751.70 L500.20 783.00" fill="none" style="stroke:var(--gc,#5cae5c);stroke-width:var(--w,1.35px)" vector-effect="non-scaling-stroke"/>
<circle cx="487.40" cy="783.00" r="3.1" style="fill:var(--gc,#5cae5c);r:var(--jr,3.1px)"/>
<circle cx="493.20" cy="783.00" r="3.1" style="fill:var(--gc,#5cae5c);r:var(--jr,3.1px)"/>
<circle cx="500.20" cy="783.00" r="3.1" style="fill:var(--gc,#5cae5c);r:var(--jr,3.1px)"/>
<path d="M493.20 783.00 L493.20 789.60" fill="none" style="stroke:var(--gc,#5cae5c);stroke-width:var(--w,1.35px)" vector-effect="non-scaling-stroke"/>
<line x1="493.20" y1="789.60" x2="493.20" y2="800.70" style="stroke:var(--pc,#b04a4a);stroke-width:var(--w,1.3px)" vector-effect="non-scaling-stroke"/>
<line x1="482.60" y1="800.70" x2="503.80" y2="800.70" style="stroke:var(--rc,#a33c3c);stroke-width:var(--w,2.6px)" vector-effect="non-scaling-stroke"/>
<text class="l" x="493.20" y="814.00" font-size="12" fill="#9b9b9b" text-anchor="middle" textLength="26.0" lengthAdjust="spacingAndGlyphs">GND</text>
<path d="M509 802.2 h21 M519.3 792 v21" style="stroke:var(--xc,#555);stroke-width:var(--w,1px)" stroke-dasharray="1.2 1.2"/>
<line x1="397.50" y1="622.50" x2="397.50" y2="638.20" style="stroke:var(--pc,#b04a4a);stroke-width:var(--w,1.3px)" vector-effect="non-scaling-stroke"/>
<line x1="390.00" y1="638.20" x2="402.80" y2="638.20" style="stroke:var(--rc,#a33c3c);stroke-width:var(--w,2.2px)" vector-effect="non-scaling-stroke"/>
<line x1="390.00" y1="645.00" x2="402.80" y2="645.00" style="stroke:var(--rc,#a33c3c);stroke-width:var(--w,2.2px)" vector-effect="non-scaling-stroke"/>
<line x1="397.50" y1="645.00" x2="397.50" y2="660.70" style="stroke:var(--pc,#b04a4a);stroke-width:var(--w,1.3px)" vector-effect="non-scaling-stroke"/>
<path d="M397.50 660.70 L397.50 668.50" fill="none" style="stroke:var(--gc,#5cae5c);stroke-width:var(--w,1.35px)" vector-effect="non-scaling-stroke"/>
<line x1="397.50" y1="668.50" x2="397.50" y2="679.80" style="stroke:var(--pc,#b04a4a);stroke-width:var(--w,1.3px)" vector-effect="non-scaling-stroke"/>
<line x1="386.90" y1="679.80" x2="408.10" y2="679.80" style="stroke:var(--rc,#a33c3c);stroke-width:var(--w,2.6px)" vector-effect="non-scaling-stroke"/>
<text class="l" x="397.50" y="693.10" font-size="12" fill="#9b9b9b" text-anchor="middle" textLength="26.0" lengthAdjust="spacingAndGlyphs">GND</text>
<text class="l" x="390.50" y="661.00" font-size="7.5" fill="#9b9b9b" text-anchor="start" transform="rotate(-90 390.50 661.00)" textLength="9.0" lengthAdjust="spacingAndGlyphs">C2</text>
<line x1="397.50" y1="638.20" x2="397.50" y2="645.00" style="stroke:var(--pc,#b04a4a);stroke-width:var(--w,1.3px)" vector-effect="non-scaling-stroke"/>
<text class="l" x="410.50" y="660.00" font-size="7.5" fill="#9b9b9b" text-anchor="start" transform="rotate(-90 410.50 660.00)" textLength="13.0" lengthAdjust="spacingAndGlyphs">1uF</text>
<path d="M723.60 738.00 L679.80 738.00 L679.80 801.00" fill="none" style="stroke:var(--gc,#5cae5c);stroke-width:var(--w,1.35px)" vector-effect="non-scaling-stroke"/>
<path d="M679.80 750.70 L723.60 750.70" fill="none" style="stroke:var(--gc,#5cae5c);stroke-width:var(--w,1.35px)" vector-effect="non-scaling-stroke"/>
<circle cx="679.80" cy="750.70" r="3.1" style="fill:var(--gc,#5cae5c);r:var(--jr,3.1px)"/>
<path d="M679.80 763.50 L723.60 763.50" fill="none" style="stroke:var(--gc,#5cae5c);stroke-width:var(--w,1.35px)" vector-effect="non-scaling-stroke"/>
<circle cx="679.80" cy="763.50" r="3.1" style="fill:var(--gc,#5cae5c);r:var(--jr,3.1px)"/>
<path d="M679.80 776.30 L723.60 776.30" fill="none" style="stroke:var(--gc,#5cae5c);stroke-width:var(--w,1.35px)" vector-effect="non-scaling-stroke"/>
<circle cx="679.80" cy="776.30" r="3.1" style="fill:var(--gc,#5cae5c);r:var(--jr,3.1px)"/>
<line x1="679.80" y1="801.00" x2="679.80" y2="813.50" style="stroke:var(--pc,#b04a4a);stroke-width:var(--w,1.3px)" vector-effect="non-scaling-stroke"/>
<line x1="669.20" y1="813.50" x2="690.40" y2="813.50" style="stroke:var(--rc,#a33c3c);stroke-width:var(--w,2.6px)" vector-effect="non-scaling-stroke"/>
<text class="l" x="679.80" y="826.80" font-size="12" fill="#9b9b9b" text-anchor="middle" textLength="26.0" lengthAdjust="spacingAndGlyphs">GND</text>
<path d="M1045.00 405.40 L1096.40 405.40" fill="none" style="stroke:var(--gc,#5cae5c);stroke-width:var(--w,1.35px)" vector-effect="non-scaling-stroke"/>
<line x1="1096.40" y1="405.40" x2="1108.20" y2="405.40" style="stroke:var(--pc,#b04a4a);stroke-width:var(--w,1.3px)" vector-effect="non-scaling-stroke"/>
<line x1="1122.40" y1="405.40" x2="1134.20" y2="405.40" style="stroke:var(--pc,#b04a4a);stroke-width:var(--w,1.3px)" vector-effect="non-scaling-stroke"/>
<rect x="1108.20" y="401.90" width="14.20" height="7.00" fill="none" style="stroke:var(--rc,#a33c3c);stroke-width:var(--w,2.2px)" vector-effect="non-scaling-stroke"/>
<line x1="1111.20" y1="404.90" x2="1119.40" y2="404.90" style="stroke:var(--rc,#a33c3c);stroke-width:var(--w,1.3px)" vector-effect="non-scaling-stroke"/>
<path d="M1134.50 405.40 L1154.60 405.40" fill="none" style="stroke:var(--gc,#5cae5c);stroke-width:var(--w,1.35px)" vector-effect="non-scaling-stroke"/>
<line x1="1154.60" y1="405.40" x2="1174.30" y2="405.40" style="stroke:var(--pc,#b04a4a);stroke-width:var(--w,1.3px)" vector-effect="non-scaling-stroke"/>
<circle cx="1192.4" cy="405.5" r="18.1" fill="none" style="stroke:var(--pc,#b04a4a);stroke-width:var(--w,1.3px)" vector-effect="non-scaling-stroke"/>
<line x1="1210.50" y1="405.40" x2="1231.20" y2="405.40" style="stroke:var(--pc,#b04a4a);stroke-width:var(--w,1.3px)" vector-effect="non-scaling-stroke"/>
<path d="M1231.20 405.40 L1256.60 405.40 L1256.60 418.40" fill="none" style="stroke:var(--gc,#5cae5c);stroke-width:var(--w,1.35px)" vector-effect="non-scaling-stroke"/>
<line x1="1256.60" y1="418.40" x2="1256.60" y2="430.00" style="stroke:var(--pc,#b04a4a);stroke-width:var(--w,1.3px)" vector-effect="non-scaling-stroke"/>
<line x1="1246.00" y1="430.00" x2="1267.20" y2="430.00" style="stroke:var(--rc,#a33c3c);stroke-width:var(--w,2.6px)" vector-effect="non-scaling-stroke"/>
<text class="l" x="1256.60" y="443.30" font-size="12" fill="#9b9b9b" text-anchor="middle" textLength="26.0" lengthAdjust="spacingAndGlyphs">GND</text>
<text class="l" x="1096.00" y="398.00" font-size="7" fill="#9b9b9b" text-anchor="start" textLength="14.0" lengthAdjust="spacingAndGlyphs">R12</text>
<text class="l" x="1096.00" y="418.00" font-size="7" fill="#9b9b9b" text-anchor="start" textLength="18.0" lengthAdjust="spacingAndGlyphs">100R</text>
<text class="l" x="1153.00" y="386.00" font-size="7" fill="#9b9b9b" text-anchor="start" textLength="17.0" lengthAdjust="spacingAndGlyphs">BUZ1</text>
<text class="l" x="1199.00" y="386.00" font-size="7" fill="#9b9b9b" text-anchor="start" textLength="58.0" lengthAdjust="spacingAndGlyphs">KS-12065D08YA</text>
<line x1="1157.50" y1="400.00" x2="1163.50" y2="400.00" style="stroke:var(--xc,#8a8a8a);stroke-width:var(--w,1.1px)" vector-effect="non-scaling-stroke"/>
<line x1="1160.50" y1="397.00" x2="1160.50" y2="403.00" style="stroke:var(--xc,#8a8a8a);stroke-width:var(--w,1.1px)" vector-effect="non-scaling-stroke"/>
<line x1="1217.00" y1="399.50" x2="1221.00" y2="399.50" style="stroke:var(--xc,#8a8a8a);stroke-width:var(--w,1px)" vector-effect="non-scaling-stroke"/>
<line x1="1177.50" y1="405.50" x2="1183.50" y2="405.50" style="stroke:var(--xc,#8a8a8a);stroke-width:var(--w,1.1px)" vector-effect="non-scaling-stroke"/>
<line x1="1180.50" y1="402.50" x2="1180.50" y2="408.50" style="stroke:var(--xc,#8a8a8a);stroke-width:var(--w,1.1px)" vector-effect="non-scaling-stroke"/>
<line x1="1189.40" y1="405.50" x2="1195.40" y2="405.50" style="stroke:var(--rc,#a33c3c);stroke-width:var(--w,1.1px)" vector-effect="non-scaling-stroke"/>
<line x1="1192.40" y1="402.50" x2="1192.40" y2="408.50" style="stroke:var(--rc,#a33c3c);stroke-width:var(--w,1.1px)" vector-effect="non-scaling-stroke"/>
<line x1="1201.00" y1="406.50" x2="1204.00" y2="406.50" style="stroke:var(--xc,#8a8a8a);stroke-width:var(--w,1px)" vector-effect="non-scaling-stroke"/>
<path d="M1045.00 418.20 L1096.40 418.20" fill="none" style="stroke:var(--gc,#5cae5c);stroke-width:var(--w,1.35px)" vector-effect="non-scaling-stroke"/>
<path d="M1045.00 431.00 L1096.40 431.00" fill="none" style="stroke:var(--gc,#5cae5c);stroke-width:var(--w,1.35px)" vector-effect="non-scaling-stroke"/>
<text class="l" x="1051.00" y="417.50" font-size="12" fill="#9b9b9b" text-anchor="start" textLength="30.0" lengthAdjust="spacingAndGlyphs">BTN1</text>
<line x1="1051.70" y1="414.70" x2="1051.70" y2="422.70" style="stroke:var(--xc,#7a7a7a);stroke-width:var(--w,0.9px)" vector-effect="non-scaling-stroke"/>
<text class="l" x="1051.00" y="430.30" font-size="12" fill="#9b9b9b" text-anchor="start" textLength="30.0" lengthAdjust="spacingAndGlyphs">BTN2</text>
<line x1="1051.70" y1="427.50" x2="1051.70" y2="435.50" style="stroke:var(--xc,#7a7a7a);stroke-width:var(--w,0.9px)" vector-effect="non-scaling-stroke"/>
<path d="M1045.00 597.30 L1122.90 597.30" fill="none" style="stroke:var(--gc,#5cae5c);stroke-width:var(--w,1.35px)" vector-effect="non-scaling-stroke"/>
<text class="l" x="1057.00" y="596.80" font-size="12" fill="#9b9b9b" text-anchor="start" textLength="35.0" lengthAdjust="spacingAndGlyphs">COM1</text>
<line x1="1057.40" y1="593.80" x2="1057.40" y2="601.80" style="stroke:var(--xc,#7a7a7a);stroke-width:var(--w,0.9px)" vector-effect="non-scaling-stroke"/>
<path d="M1045.00 610.00 L1122.90 610.00" fill="none" style="stroke:var(--gc,#5cae5c);stroke-width:var(--w,1.35px)" vector-effect="non-scaling-stroke"/>
<text class="l" x="1057.00" y="609.50" font-size="12" fill="#9b9b9b" text-anchor="start" textLength="35.0" lengthAdjust="spacingAndGlyphs">COM2</text>
<line x1="1057.40" y1="606.50" x2="1057.40" y2="614.50" style="stroke:var(--xc,#7a7a7a);stroke-width:var(--w,0.9px)" vector-effect="non-scaling-stroke"/>
<path d="M1045.00 622.80 L1122.90 622.80" fill="none" style="stroke:var(--gc,#5cae5c);stroke-width:var(--w,1.35px)" vector-effect="non-scaling-stroke"/>
<text class="l" x="1057.00" y="622.30" font-size="12" fill="#9b9b9b" text-anchor="start" textLength="35.0" lengthAdjust="spacingAndGlyphs">COM3</text>
<line x1="1057.40" y1="619.30" x2="1057.40" y2="627.30" style="stroke:var(--xc,#7a7a7a);stroke-width:var(--w,0.9px)" vector-effect="non-scaling-stroke"/>
<path d="M1045.00 635.60 L1122.90 635.60" fill="none" style="stroke:var(--gc,#5cae5c);stroke-width:var(--w,1.35px)" vector-effect="non-scaling-stroke"/>
<text class="l" x="1057.00" y="635.10" font-size="12" fill="#9b9b9b" text-anchor="start" textLength="35.0" lengthAdjust="spacingAndGlyphs">COM4</text>
<line x1="1057.40" y1="632.10" x2="1057.40" y2="640.10" style="stroke:var(--xc,#7a7a7a);stroke-width:var(--w,0.9px)" vector-effect="non-scaling-stroke"/>
<path d="M1045.00 674.00 L1077.30 674.00" fill="none" style="stroke:var(--gc,#5cae5c);stroke-width:var(--w,1.35px)" vector-effect="non-scaling-stroke"/>
<line x1="1077.30" y1="674.00" x2="1089.20" y2="674.00" style="stroke:var(--pc,#b04a4a);stroke-width:var(--w,1.3px)" vector-effect="non-scaling-stroke"/>
<line x1="1102.80" y1="674.00" x2="1114.70" y2="674.00" style="stroke:var(--pc,#b04a4a);stroke-width:var(--w,1.3px)" vector-effect="non-scaling-stroke"/>
<rect x="1089.20" y="670.50" width="13.60" height="7.00" fill="none" style="stroke:var(--rc,#a33c3c);stroke-width:var(--w,2.2px)" vector-effect="non-scaling-stroke"/>
<line x1="1092.20" y1="673.50" x2="1099.80" y2="673.50" style="stroke:var(--rc,#a33c3c);stroke-width:var(--w,1.3px)" vector-effect="non-scaling-stroke"/>
<text class="l" x="1077.20" y="686.00" font-size="7.5" fill="#9b9b9b" text-anchor="start" textLength="17.5" lengthAdjust="spacingAndGlyphs">220R</text>
<text class="l" x="1077.20" y="667.00" font-size="7" fill="#9b9b9b" text-anchor="start" textLength="9.0" lengthAdjust="spacingAndGlyphs">R3</text>
<text class="l" x="1102.70" y="681.50" font-size="7" fill="#9b9b9b" text-anchor="start" textLength="9.0" lengthAdjust="spacingAndGlyphs">R4</text>
<path d="M1045.00 686.80 L1102.88 686.80" fill="none" style="stroke:var(--gc,#5cae5c);stroke-width:var(--w,1.35px)" vector-effect="non-scaling-stroke"/>
<line x1="1102.88" y1="686.80" x2="1114.78" y2="686.80" style="stroke:var(--pc,#b04a4a);stroke-width:var(--w,1.3px)" vector-effect="non-scaling-stroke"/>
<line x1="1128.38" y1="686.80" x2="1140.28" y2="686.80" style="stroke:var(--pc,#b04a4a);stroke-width:var(--w,1.3px)" vector-effect="non-scaling-stroke"/>
<rect x="1114.78" y="683.30" width="13.60" height="7.00" fill="none" style="stroke:var(--rc,#a33c3c);stroke-width:var(--w,2.2px)" vector-effect="non-scaling-stroke"/>
<line x1="1117.78" y1="686.30" x2="1125.38" y2="686.30" style="stroke:var(--rc,#a33c3c);stroke-width:var(--w,1.3px)" vector-effect="non-scaling-stroke"/>
<text class="l" x="1102.78" y="698.80" font-size="7.5" fill="#9b9b9b" text-anchor="start" textLength="17.5" lengthAdjust="spacingAndGlyphs">220R</text>
<text class="l" x="1128.28" y="694.30" font-size="7" fill="#9b9b9b" text-anchor="start" textLength="9.0" lengthAdjust="spacingAndGlyphs">R5</text>
<path d="M1045.00 699.60 L1128.46 699.60" fill="none" style="stroke:var(--gc,#5cae5c);stroke-width:var(--w,1.35px)" vector-effect="non-scaling-stroke"/>
<line x1="1128.46" y1="699.60" x2="1140.36" y2="699.60" style="stroke:var(--pc,#b04a4a);stroke-width:var(--w,1.3px)" vector-effect="non-scaling-stroke"/>
<line x1="1153.96" y1="699.60" x2="1165.86" y2="699.60" style="stroke:var(--pc,#b04a4a);stroke-width:var(--w,1.3px)" vector-effect="non-scaling-stroke"/>
<rect x="1140.36" y="696.10" width="13.60" height="7.00" fill="none" style="stroke:var(--rc,#a33c3c);stroke-width:var(--w,2.2px)" vector-effect="non-scaling-stroke"/>
<line x1="1143.36" y1="699.10" x2="1150.96" y2="699.10" style="stroke:var(--rc,#a33c3c);stroke-width:var(--w,1.3px)" vector-effect="non-scaling-stroke"/>
<text class="l" x="1128.36" y="711.60" font-size="7.5" fill="#9b9b9b" text-anchor="start" textLength="17.5" lengthAdjust="spacingAndGlyphs">220R</text>
<text class="l" x="1153.86" y="707.10" font-size="7" fill="#9b9b9b" text-anchor="start" textLength="9.0" lengthAdjust="spacingAndGlyphs">R6</text>
<path d="M1045.00 712.40 L1154.04 712.40" fill="none" style="stroke:var(--gc,#5cae5c);stroke-width:var(--w,1.35px)" vector-effect="non-scaling-stroke"/>
<line x1="1154.04" y1="712.40" x2="1165.94" y2="712.40" style="stroke:var(--pc,#b04a4a);stroke-width:var(--w,1.3px)" vector-effect="non-scaling-stroke"/>
<line x1="1179.54" y1="712.40" x2="1191.44" y2="712.40" style="stroke:var(--pc,#b04a4a);stroke-width:var(--w,1.3px)" vector-effect="non-scaling-stroke"/>
<rect x="1165.94" y="708.90" width="13.60" height="7.00" fill="none" style="stroke:var(--rc,#a33c3c);stroke-width:var(--w,2.2px)" vector-effect="non-scaling-stroke"/>
<line x1="1168.94" y1="711.90" x2="1176.54" y2="711.90" style="stroke:var(--rc,#a33c3c);stroke-width:var(--w,1.3px)" vector-effect="non-scaling-stroke"/>
<text class="l" x="1153.94" y="724.40" font-size="7.5" fill="#9b9b9b" text-anchor="start" textLength="17.5" lengthAdjust="spacingAndGlyphs">220R</text>
<text class="l" x="1179.44" y="719.90" font-size="7" fill="#9b9b9b" text-anchor="start" textLength="9.0" lengthAdjust="spacingAndGlyphs">R7</text>
<path d="M1045.00 725.20 L1179.62 725.20" fill="none" style="stroke:var(--gc,#5cae5c);stroke-width:var(--w,1.35px)" vector-effect="non-scaling-stroke"/>
<line x1="1179.62" y1="725.20" x2="1191.52" y2="725.20" style="stroke:var(--pc,#b04a4a);stroke-width:var(--w,1.3px)" vector-effect="non-scaling-stroke"/>
<line x1="1205.12" y1="725.20" x2="1217.02" y2="725.20" style="stroke:var(--pc,#b04a4a);stroke-width:var(--w,1.3px)" vector-effect="non-scaling-stroke"/>
<rect x="1191.52" y="721.70" width="13.60" height="7.00" fill="none" style="stroke:var(--rc,#a33c3c);stroke-width:var(--w,2.2px)" vector-effect="non-scaling-stroke"/>
<line x1="1194.52" y1="724.70" x2="1202.12" y2="724.70" style="stroke:var(--rc,#a33c3c);stroke-width:var(--w,1.3px)" vector-effect="non-scaling-stroke"/>
<text class="l" x="1179.52" y="737.20" font-size="7.5" fill="#9b9b9b" text-anchor="start" textLength="17.5" lengthAdjust="spacingAndGlyphs">220R</text>
<text class="l" x="1205.02" y="732.70" font-size="7" fill="#9b9b9b" text-anchor="start" textLength="9.0" lengthAdjust="spacingAndGlyphs">R8</text>
<path d="M1045.00 738.00 L1205.20 738.00" fill="none" style="stroke:var(--gc,#5cae5c);stroke-width:var(--w,1.35px)" vector-effect="non-scaling-stroke"/>
<line x1="1205.20" y1="738.00" x2="1217.10" y2="738.00" style="stroke:var(--pc,#b04a4a);stroke-width:var(--w,1.3px)" vector-effect="non-scaling-stroke"/>
<line x1="1230.70" y1="738.00" x2="1242.60" y2="738.00" style="stroke:var(--pc,#b04a4a);stroke-width:var(--w,1.3px)" vector-effect="non-scaling-stroke"/>
<rect x="1217.10" y="734.50" width="13.60" height="7.00" fill="none" style="stroke:var(--rc,#a33c3c);stroke-width:var(--w,2.2px)" vector-effect="non-scaling-stroke"/>
<line x1="1220.10" y1="737.50" x2="1227.70" y2="737.50" style="stroke:var(--rc,#a33c3c);stroke-width:var(--w,1.3px)" vector-effect="non-scaling-stroke"/>
<text class="l" x="1205.10" y="750.00" font-size="7.5" fill="#9b9b9b" text-anchor="start" textLength="17.5" lengthAdjust="spacingAndGlyphs">220R</text>
<text class="l" x="1230.60" y="745.50" font-size="7" fill="#9b9b9b" text-anchor="start" textLength="9.0" lengthAdjust="spacingAndGlyphs">R9</text>
<path d="M1045.00 750.70 L1230.78 750.70" fill="none" style="stroke:var(--gc,#5cae5c);stroke-width:var(--w,1.35px)" vector-effect="non-scaling-stroke"/>
<line x1="1230.78" y1="750.70" x2="1242.68" y2="750.70" style="stroke:var(--pc,#b04a4a);stroke-width:var(--w,1.3px)" vector-effect="non-scaling-stroke"/>
<line x1="1256.28" y1="750.70" x2="1268.18" y2="750.70" style="stroke:var(--pc,#b04a4a);stroke-width:var(--w,1.3px)" vector-effect="non-scaling-stroke"/>
<rect x="1242.68" y="747.20" width="13.60" height="7.00" fill="none" style="stroke:var(--rc,#a33c3c);stroke-width:var(--w,2.2px)" vector-effect="non-scaling-stroke"/>
<line x1="1245.68" y1="750.20" x2="1253.28" y2="750.20" style="stroke:var(--rc,#a33c3c);stroke-width:var(--w,1.3px)" vector-effect="non-scaling-stroke"/>
<text class="l" x="1230.68" y="762.70" font-size="7.5" fill="#9b9b9b" text-anchor="start" textLength="17.5" lengthAdjust="spacingAndGlyphs">220R</text>
<text class="l" x="1256.18" y="758.20" font-size="7" fill="#9b9b9b" text-anchor="start" textLength="13.0" lengthAdjust="spacingAndGlyphs">R10</text>
<path d="M1045.00 763.50 L1256.36 763.50" fill="none" style="stroke:var(--gc,#5cae5c);stroke-width:var(--w,1.35px)" vector-effect="non-scaling-stroke"/>
<line x1="1256.36" y1="763.50" x2="1268.26" y2="763.50" style="stroke:var(--pc,#b04a4a);stroke-width:var(--w,1.3px)" vector-effect="non-scaling-stroke"/>
<line x1="1281.86" y1="763.50" x2="1293.76" y2="763.50" style="stroke:var(--pc,#b04a4a);stroke-width:var(--w,1.3px)" vector-effect="non-scaling-stroke"/>
<rect x="1268.26" y="760.00" width="13.60" height="7.00" fill="none" style="stroke:var(--rc,#a33c3c);stroke-width:var(--w,2.2px)" vector-effect="non-scaling-stroke"/>
<line x1="1271.26" y1="763.00" x2="1278.86" y2="763.00" style="stroke:var(--rc,#a33c3c);stroke-width:var(--w,1.3px)" vector-effect="non-scaling-stroke"/>
<text class="l" x="1256.26" y="775.50" font-size="7.5" fill="#9b9b9b" text-anchor="start" textLength="17.5" lengthAdjust="spacingAndGlyphs">220R</text>
<path d="M1114.60 674.00 L1307.60 674.00 L1307.60 539.80 L1487.50 539.80 L1487.50 585.70" fill="none" style="stroke:var(--gc,#5cae5c);stroke-width:var(--w,1.35px)" vector-effect="non-scaling-stroke"/>
<path d="M1140.30 686.80 L1320.00 686.80 L1320.00 552.50 L1449.10 552.50 L1449.10 585.70" fill="none" style="stroke:var(--gc,#5cae5c);stroke-width:var(--w,1.35px)" vector-effect="non-scaling-stroke"/>
<path d="M1165.90 699.60 L1334.00 699.60 L1334.00 566.10 L1436.30 566.10 L1436.30 585.70" fill="none" style="stroke:var(--gc,#5cae5c);stroke-width:var(--w,1.35px)" vector-effect="non-scaling-stroke"/>
<path d="M1191.50 712.40 L1423.50 712.40 L1423.50 699.70" fill="none" style="stroke:var(--gc,#5cae5c);stroke-width:var(--w,1.35px)" vector-effect="non-scaling-stroke"/>
<path d="M1217.10 725.20 L1436.30 725.20 L1436.30 699.70" fill="none" style="stroke:var(--gc,#5cae5c);stroke-width:var(--w,1.35px)" vector-effect="non-scaling-stroke"/>
<path d="M1242.70 738.00 L1449.10 738.00 L1449.10 699.70" fill="none" style="stroke:var(--gc,#5cae5c);stroke-width:var(--w,1.35px)" vector-effect="non-scaling-stroke"/>
<path d="M1268.30 750.70 L1461.90 750.70 L1461.90 699.70" fill="none" style="stroke:var(--gc,#5cae5c);stroke-width:var(--w,1.35px)" vector-effect="non-scaling-stroke"/>
<path d="M1293.90 763.50 L1474.70 763.50 L1474.70 699.70" fill="none" style="stroke:var(--gc,#5cae5c);stroke-width:var(--w,1.35px)" vector-effect="non-scaling-stroke"/>
<line x1="1423.50" y1="585.70" x2="1423.50" y2="601.30" style="stroke:var(--pc,#b04a4a);stroke-width:var(--w,1.3px)" vector-effect="non-scaling-stroke"/>
<line x1="1423.50" y1="684.30" x2="1423.50" y2="699.70" style="stroke:var(--pc,#b04a4a);stroke-width:var(--w,1.3px)" vector-effect="non-scaling-stroke"/>
<line x1="1436.30" y1="585.70" x2="1436.30" y2="601.30" style="stroke:var(--pc,#b04a4a);stroke-width:var(--w,1.3px)" vector-effect="non-scaling-stroke"/>
<line x1="1436.30" y1="684.30" x2="1436.30" y2="699.70" style="stroke:var(--pc,#b04a4a);stroke-width:var(--w,1.3px)" vector-effect="non-scaling-stroke"/>
<line x1="1449.10" y1="585.70" x2="1449.10" y2="601.30" style="stroke:var(--pc,#b04a4a);stroke-width:var(--w,1.3px)" vector-effect="non-scaling-stroke"/>
<line x1="1449.10" y1="684.30" x2="1449.10" y2="699.70" style="stroke:var(--pc,#b04a4a);stroke-width:var(--w,1.3px)" vector-effect="non-scaling-stroke"/>
<line x1="1461.90" y1="585.70" x2="1461.90" y2="601.30" style="stroke:var(--pc,#b04a4a);stroke-width:var(--w,1.3px)" vector-effect="non-scaling-stroke"/>
<line x1="1461.90" y1="684.30" x2="1461.90" y2="699.70" style="stroke:var(--pc,#b04a4a);stroke-width:var(--w,1.3px)" vector-effect="non-scaling-stroke"/>
<line x1="1474.70" y1="585.70" x2="1474.70" y2="601.30" style="stroke:var(--pc,#b04a4a);stroke-width:var(--w,1.3px)" vector-effect="non-scaling-stroke"/>
<line x1="1474.70" y1="684.30" x2="1474.70" y2="699.70" style="stroke:var(--pc,#b04a4a);stroke-width:var(--w,1.3px)" vector-effect="non-scaling-stroke"/>
<line x1="1487.50" y1="585.70" x2="1487.50" y2="601.30" style="stroke:var(--pc,#b04a4a);stroke-width:var(--w,1.3px)" vector-effect="non-scaling-stroke"/>
<line x1="1487.50" y1="684.30" x2="1487.50" y2="699.70" style="stroke:var(--pc,#b04a4a);stroke-width:var(--w,1.3px)" vector-effect="non-scaling-stroke"/>
<text class="p" x="1421.20" y="594.50" font-size="9" fill="#9b9b9b" text-anchor="start" transform="rotate(-90 1421.20 594.50)">12</text>
<text class="p" x="1434.00" y="594.50" font-size="9" fill="#9b9b9b" text-anchor="start" transform="rotate(-90 1434.00 594.50)">11</text>
<text class="p" x="1446.80" y="594.50" font-size="9" fill="#9b9b9b" text-anchor="start" transform="rotate(-90 1446.80 594.50)">10</text>
<text class="p" x="1459.60" y="594.50" font-size="9" fill="#9b9b9b" text-anchor="start" transform="rotate(-90 1459.60 594.50)">9</text>
<text class="p" x="1472.40" y="594.50" font-size="9" fill="#9b9b9b" text-anchor="start" transform="rotate(-90 1472.40 594.50)">8</text>
<text class="p" x="1485.20" y="594.50" font-size="9" fill="#9b9b9b" text-anchor="start" transform="rotate(-90 1485.20 594.50)">7</text>
<text class="p" x="1421.20" y="694.30" font-size="9" fill="#9b9b9b" text-anchor="start" transform="rotate(-90 1421.20 694.30)">1</text>
<text class="p" x="1434.00" y="694.30" font-size="9" fill="#9b9b9b" text-anchor="start" transform="rotate(-90 1434.00 694.30)">2</text>
<text class="p" x="1446.80" y="694.30" font-size="9" fill="#9b9b9b" text-anchor="start" transform="rotate(-90 1446.80 694.30)">3</text>
<text class="p" x="1459.60" y="694.30" font-size="9" fill="#9b9b9b" text-anchor="start" transform="rotate(-90 1459.60 694.30)">4</text>
<text class="p" x="1472.40" y="694.30" font-size="9" fill="#9b9b9b" text-anchor="start" transform="rotate(-90 1472.40 694.30)">5</text>
<text class="p" x="1485.20" y="694.30" font-size="9" fill="#9b9b9b" text-anchor="start" transform="rotate(-90 1485.20 694.30)">6</text>
<rect x="1394.20" y="601.30" width="121.30" height="83.00" fill="none" style="stroke:var(--rc,#a33c3c);stroke-width:var(--w,1.5px)" vector-effect="non-scaling-stroke"/>
<path d="M1423.50 585.70 L1423.50 578.30 L1377.40 578.30" fill="none" style="stroke:var(--gc,#5cae5c);stroke-width:var(--w,1.35px)" vector-effect="non-scaling-stroke"/>
<text class="l" x="1384.00" y="577.50" font-size="12" fill="#9b9b9b" text-anchor="start" textLength="34.5" lengthAdjust="spacingAndGlyphs">COM1</text>
<line x1="1384.50" y1="574.80" x2="1384.50" y2="582.80" style="stroke:var(--xc,#7a7a7a);stroke-width:var(--w,0.9px)" vector-effect="non-scaling-stroke"/>
<path d="M1461.90 585.70 L1461.90 552.50" fill="none" style="stroke:var(--gc,#5cae5c);stroke-width:var(--w,1.35px)" vector-effect="non-scaling-stroke"/>
<text class="l" x="1461.00" y="583.50" font-size="12" fill="#9b9b9b" text-anchor="start" transform="rotate(-90 1461.00 583.50)" textLength="36.0" lengthAdjust="spacingAndGlyphs">COM2</text>
<line x1="1458.00" y1="585.30" x2="1464.00" y2="585.30" style="stroke:var(--xc,#7a7a7a);stroke-width:var(--w,0.9px)" vector-effect="non-scaling-stroke"/>
<path d="M1474.70 585.70 L1474.70 552.50" fill="none" style="stroke:var(--gc,#5cae5c);stroke-width:var(--w,1.35px)" vector-effect="non-scaling-stroke"/>
<text class="l" x="1473.80" y="583.50" font-size="12" fill="#9b9b9b" text-anchor="start" transform="rotate(-90 1473.80 583.50)" textLength="36.0" lengthAdjust="spacingAndGlyphs">COM3</text>
<line x1="1471.00" y1="585.30" x2="1477.00" y2="585.30" style="stroke:var(--xc,#7a7a7a);stroke-width:var(--w,0.9px)" vector-effect="non-scaling-stroke"/>
<path d="M1487.50 699.70 L1487.50 732.60" fill="none" style="stroke:var(--gc,#5cae5c);stroke-width:var(--w,1.35px)" vector-effect="non-scaling-stroke"/>
<text class="l" x="1497.00" y="735.00" font-size="12" fill="#9b9b9b" text-anchor="start" transform="rotate(-90 1497.00 735.00)" textLength="35.0" lengthAdjust="spacingAndGlyphs">COM4</text>
<line x1="1484.00" y1="704.00" x2="1491.00" y2="704.00" style="stroke:var(--xc,#7a7a7a);stroke-width:var(--w,0.9px)" vector-effect="non-scaling-stroke"/>
<text class="l" x="1368.00" y="600.80" font-size="11.3" fill="#9b9b9b" text-anchor="start" textLength="14.3" lengthAdjust="spacingAndGlyphs">U2</text>
<text class="l" x="1494.00" y="696.00" font-size="11.3" fill="#9b9b9b" text-anchor="start" textLength="77.0" lengthAdjust="spacingAndGlyphs">SYD3642ASR</text>
<line x1="1403.00" y1="622.10" x2="1416.90" y2="622.10" style="stroke:var(--rc,#a33c3c);stroke-width:var(--w,1.9px)" vector-effect="non-scaling-stroke"/>
<line x1="1403.00" y1="641.70" x2="1416.90" y2="641.70" style="stroke:var(--rc,#a33c3c);stroke-width:var(--w,1.9px)" vector-effect="non-scaling-stroke"/>
<line x1="1403.00" y1="661.00" x2="1416.90" y2="661.00" style="stroke:var(--rc,#a33c3c);stroke-width:var(--w,1.9px)" vector-effect="non-scaling-stroke"/>
<line x1="1400.00" y1="624.70" x2="1400.00" y2="638.60" style="stroke:var(--rc,#a33c3c);stroke-width:var(--w,1.9px)" vector-effect="non-scaling-stroke"/>
<line x1="1419.90" y1="624.70" x2="1419.90" y2="638.60" style="stroke:var(--rc,#a33c3c);stroke-width:var(--w,1.9px)" vector-effect="non-scaling-stroke"/>
<line x1="1400.00" y1="644.20" x2="1400.00" y2="658.50" style="stroke:var(--rc,#a33c3c);stroke-width:var(--w,1.9px)" vector-effect="non-scaling-stroke"/>
<line x1="1419.90" y1="644.20" x2="1419.90" y2="658.50" style="stroke:var(--rc,#a33c3c);stroke-width:var(--w,1.9px)" vector-effect="non-scaling-stroke"/>
<line x1="1428.00" y1="622.10" x2="1443.30" y2="622.10" style="stroke:var(--rc,#a33c3c);stroke-width:var(--w,1.9px)" vector-effect="non-scaling-stroke"/>
<line x1="1428.00" y1="641.70" x2="1443.30" y2="641.70" style="stroke:var(--rc,#a33c3c);stroke-width:var(--w,1.9px)" vector-effect="non-scaling-stroke"/>
<line x1="1428.00" y1="661.00" x2="1443.30" y2="661.00" style="stroke:var(--rc,#a33c3c);stroke-width:var(--w,1.9px)" vector-effect="non-scaling-stroke"/>
<line x1="1425.00" y1="624.70" x2="1425.00" y2="638.60" style="stroke:var(--rc,#a33c3c);stroke-width:var(--w,1.9px)" vector-effect="non-scaling-stroke"/>
<line x1="1444.90" y1="624.70" x2="1444.90" y2="638.60" style="stroke:var(--rc,#a33c3c);stroke-width:var(--w,1.9px)" vector-effect="non-scaling-stroke"/>
<line x1="1425.00" y1="644.20" x2="1425.00" y2="658.50" style="stroke:var(--rc,#a33c3c);stroke-width:var(--w,1.9px)" vector-effect="non-scaling-stroke"/>
<line x1="1444.90" y1="644.20" x2="1444.90" y2="658.50" style="stroke:var(--rc,#a33c3c);stroke-width:var(--w,1.9px)" vector-effect="non-scaling-stroke"/>
<line x1="1466.30" y1="622.10" x2="1480.70" y2="622.10" style="stroke:var(--rc,#a33c3c);stroke-width:var(--w,1.9px)" vector-effect="non-scaling-stroke"/>
<line x1="1466.30" y1="641.70" x2="1480.70" y2="641.70" style="stroke:var(--rc,#a33c3c);stroke-width:var(--w,1.9px)" vector-effect="non-scaling-stroke"/>
<line x1="1466.30" y1="661.00" x2="1480.70" y2="661.00" style="stroke:var(--rc,#a33c3c);stroke-width:var(--w,1.9px)" vector-effect="non-scaling-stroke"/>
<line x1="1463.70" y1="624.70" x2="1463.70" y2="638.60" style="stroke:var(--rc,#a33c3c);stroke-width:var(--w,1.9px)" vector-effect="non-scaling-stroke"/>
<line x1="1483.20" y1="624.70" x2="1483.20" y2="638.60" style="stroke:var(--rc,#a33c3c);stroke-width:var(--w,1.9px)" vector-effect="non-scaling-stroke"/>
<line x1="1463.70" y1="644.20" x2="1463.70" y2="658.50" style="stroke:var(--rc,#a33c3c);stroke-width:var(--w,1.9px)" vector-effect="non-scaling-stroke"/>
<line x1="1483.20" y1="644.20" x2="1483.20" y2="658.50" style="stroke:var(--rc,#a33c3c);stroke-width:var(--w,1.9px)" vector-effect="non-scaling-stroke"/>
<line x1="1492.80" y1="622.10" x2="1506.90" y2="622.10" style="stroke:var(--rc,#a33c3c);stroke-width:var(--w,1.9px)" vector-effect="non-scaling-stroke"/>
<line x1="1492.80" y1="641.70" x2="1506.90" y2="641.70" style="stroke:var(--rc,#a33c3c);stroke-width:var(--w,1.9px)" vector-effect="non-scaling-stroke"/>
<line x1="1492.80" y1="661.00" x2="1506.90" y2="661.00" style="stroke:var(--rc,#a33c3c);stroke-width:var(--w,1.9px)" vector-effect="non-scaling-stroke"/>
<line x1="1490.00" y1="624.70" x2="1490.00" y2="638.60" style="stroke:var(--rc,#a33c3c);stroke-width:var(--w,1.9px)" vector-effect="non-scaling-stroke"/>
<line x1="1509.70" y1="624.70" x2="1509.70" y2="638.60" style="stroke:var(--rc,#a33c3c);stroke-width:var(--w,1.9px)" vector-effect="non-scaling-stroke"/>
<line x1="1490.00" y1="644.20" x2="1490.00" y2="658.50" style="stroke:var(--rc,#a33c3c);stroke-width:var(--w,1.9px)" vector-effect="non-scaling-stroke"/>
<line x1="1509.70" y1="644.20" x2="1509.70" y2="658.50" style="stroke:var(--rc,#a33c3c);stroke-width:var(--w,1.9px)" vector-effect="non-scaling-stroke"/>
<circle cx="1455" cy="632.6" r="3.4" fill="none" style="stroke:var(--rc,#a33c3c);stroke-width:var(--w,2.9px)" vector-effect="non-scaling-stroke"/>
<circle cx="1455" cy="652" r="3.4" fill="none" style="stroke:var(--rc,#a33c3c);stroke-width:var(--w,2.9px)" vector-effect="non-scaling-stroke"/>
<line x1="1452.00" y1="642.00" x2="1458.00" y2="642.00" style="stroke:var(--rc,#a33c3c);stroke-width:var(--w,1px)" vector-effect="non-scaling-stroke"/>
<line x1="1455.00" y1="639.00" x2="1455.00" y2="645.00" style="stroke:var(--rc,#a33c3c);stroke-width:var(--w,1px)" vector-effect="non-scaling-stroke"/>
<text class="p" x="1427.00" y="609.50" font-size="10" fill="#9b9b9b" text-anchor="end" transform="rotate(-90 1427.00 609.50)" textLength="30.0" lengthAdjust="spacingAndGlyphs">COM1</text>
<text class="p" x="1439.80" y="609.50" font-size="10" fill="#9b9b9b" text-anchor="end" transform="rotate(-90 1439.80 609.50)" textLength="8.0" lengthAdjust="spacingAndGlyphs">A</text>
<text class="p" x="1452.60" y="609.50" font-size="10" fill="#9b9b9b" text-anchor="end" transform="rotate(-90 1452.60 609.50)" textLength="6.0" lengthAdjust="spacingAndGlyphs">F</text>
<text class="p" x="1465.40" y="609.50" font-size="10" fill="#9b9b9b" text-anchor="end" transform="rotate(-90 1465.40 609.50)" textLength="30.0" lengthAdjust="spacingAndGlyphs">COM2</text>
<text class="p" x="1478.20" y="609.50" font-size="10" fill="#9b9b9b" text-anchor="end" transform="rotate(-90 1478.20 609.50)" textLength="30.0" lengthAdjust="spacingAndGlyphs">COM3</text>
<text class="p" x="1491.00" y="609.50" font-size="10" fill="#9b9b9b" text-anchor="end" transform="rotate(-90 1491.00 609.50)" textLength="7.0" lengthAdjust="spacingAndGlyphs">B</text>
<text class="p" x="1427.00" y="675.00" font-size="10" fill="#9b9b9b" text-anchor="start" transform="rotate(-90 1427.00 675.00)" textLength="6.5" lengthAdjust="spacingAndGlyphs">E</text>
<text class="p" x="1439.80" y="675.00" font-size="10" fill="#9b9b9b" text-anchor="start" transform="rotate(-90 1439.80 675.00)" textLength="7.5" lengthAdjust="spacingAndGlyphs">D</text>
<text class="p" x="1452.60" y="675.00" font-size="10" fill="#9b9b9b" text-anchor="start" transform="rotate(-90 1452.60 675.00)" textLength="14.0" lengthAdjust="spacingAndGlyphs">DP</text>
<text class="p" x="1465.40" y="675.00" font-size="10" fill="#9b9b9b" text-anchor="start" transform="rotate(-90 1465.40 675.00)" textLength="7.5" lengthAdjust="spacingAndGlyphs">C</text>
<text class="p" x="1478.20" y="675.00" font-size="10" fill="#9b9b9b" text-anchor="start" transform="rotate(-90 1478.20 675.00)" textLength="7.5" lengthAdjust="spacingAndGlyphs">G</text>
<text class="p" x="1491.00" y="675.00" font-size="10" fill="#9b9b9b" text-anchor="start" transform="rotate(-90 1491.00 675.00)" textLength="30.0" lengthAdjust="spacingAndGlyphs">COM4</text>
<line x1="1448.30" y1="296.30" x2="1538.95" y2="296.30" style="stroke:var(--pc,#b04a4a);stroke-width:var(--w,1.3px)" vector-effect="non-scaling-stroke"/>
<line x1="1448.30" y1="322.30" x2="1538.95" y2="322.30" style="stroke:var(--pc,#b04a4a);stroke-width:var(--w,1.3px)" vector-effect="non-scaling-stroke"/>
<rect x="1467.00" y="283.30" width="51.75" height="50.90" fill="none" style="stroke:var(--rc,#a33c3c);stroke-width:var(--w,2.6px)" vector-effect="non-scaling-stroke"/>
<line x1="1492.90" y1="296.30" x2="1492.90" y2="303.00" style="stroke:var(--rc,#a33c3c);stroke-width:var(--w,1.2px)" vector-effect="non-scaling-stroke"/>
<line x1="1492.90" y1="303.00" x2="1485.70" y2="312.90" style="stroke:var(--rc,#a33c3c);stroke-width:var(--w,1.2px)" vector-effect="non-scaling-stroke"/>
<line x1="1490.10" y1="309.80" x2="1495.70" y2="309.80" style="stroke:var(--rc,#a33c3c);stroke-width:var(--w,1.2px)" vector-effect="non-scaling-stroke"/>
<line x1="1492.90" y1="306.50" x2="1492.90" y2="312.60" style="stroke:var(--rc,#a33c3c);stroke-width:var(--w,1.2px)" vector-effect="non-scaling-stroke"/>
<line x1="1492.90" y1="315.30" x2="1492.90" y2="322.30" style="stroke:var(--rc,#a33c3c);stroke-width:var(--w,1.2px)" vector-effect="non-scaling-stroke"/>
<text class="p" x="1473.00" y="300.30" font-size="10" fill="#9b9b9b" text-anchor="start" textLength="10.5" lengthAdjust="spacingAndGlyphs">A0</text>
<text class="p" x="1501.00" y="300.30" font-size="10" fill="#9b9b9b" text-anchor="start" textLength="10.5" lengthAdjust="spacingAndGlyphs">A1</text>
<text class="p" x="1473.00" y="326.30" font-size="10" fill="#9b9b9b" text-anchor="start" textLength="10.5" lengthAdjust="spacingAndGlyphs">B0</text>
<text class="p" x="1500.50" y="326.80" font-size="10" fill="#9b9b9b" text-anchor="start" textLength="10.5" lengthAdjust="spacingAndGlyphs">B1</text>
<text class="p" x="1452.50" y="294.50" font-size="10" fill="#9b9b9b" text-anchor="start">1</text>
<text class="p" x="1452.50" y="320.50" font-size="10" fill="#9b9b9b" text-anchor="start">2</text>
<text class="p" x="1525.55" y="294.50" font-size="10" fill="#9b9b9b" text-anchor="start">4</text>
<text class="p" x="1525.55" y="320.50" font-size="10" fill="#9b9b9b" text-anchor="start">3</text>
<text class="l" x="1468.00" y="281.80" font-size="6.5" fill="#9b9b9b" text-anchor="start" textLength="8.0" lengthAdjust="spacingAndGlyphs">K3</text>
<line x1="1448.30" y1="359.90" x2="1538.95" y2="359.90" style="stroke:var(--pc,#b04a4a);stroke-width:var(--w,1.3px)" vector-effect="non-scaling-stroke"/>
<line x1="1448.30" y1="385.90" x2="1538.95" y2="385.90" style="stroke:var(--pc,#b04a4a);stroke-width:var(--w,1.3px)" vector-effect="non-scaling-stroke"/>
<rect x="1467.00" y="346.90" width="51.75" height="50.90" fill="none" style="stroke:var(--rc,#a33c3c);stroke-width:var(--w,2.6px)" vector-effect="non-scaling-stroke"/>
<line x1="1492.90" y1="359.90" x2="1492.90" y2="366.60" style="stroke:var(--rc,#a33c3c);stroke-width:var(--w,1.2px)" vector-effect="non-scaling-stroke"/>
<line x1="1492.90" y1="366.60" x2="1485.70" y2="376.50" style="stroke:var(--rc,#a33c3c);stroke-width:var(--w,1.2px)" vector-effect="non-scaling-stroke"/>
<line x1="1490.10" y1="373.40" x2="1495.70" y2="373.40" style="stroke:var(--rc,#a33c3c);stroke-width:var(--w,1.2px)" vector-effect="non-scaling-stroke"/>
<line x1="1492.90" y1="370.10" x2="1492.90" y2="376.20" style="stroke:var(--rc,#a33c3c);stroke-width:var(--w,1.2px)" vector-effect="non-scaling-stroke"/>
<line x1="1492.90" y1="378.90" x2="1492.90" y2="385.90" style="stroke:var(--rc,#a33c3c);stroke-width:var(--w,1.2px)" vector-effect="non-scaling-stroke"/>
<text class="p" x="1473.00" y="363.90" font-size="10" fill="#9b9b9b" text-anchor="start" textLength="10.5" lengthAdjust="spacingAndGlyphs">A0</text>
<text class="p" x="1501.00" y="363.90" font-size="10" fill="#9b9b9b" text-anchor="start" textLength="10.5" lengthAdjust="spacingAndGlyphs">A1</text>
<text class="p" x="1473.00" y="389.90" font-size="10" fill="#9b9b9b" text-anchor="start" textLength="10.5" lengthAdjust="spacingAndGlyphs">B0</text>
<text class="p" x="1500.50" y="390.40" font-size="10" fill="#9b9b9b" text-anchor="start" textLength="10.5" lengthAdjust="spacingAndGlyphs">B1</text>
<text class="p" x="1452.50" y="358.10" font-size="10" fill="#9b9b9b" text-anchor="start">1</text>
<text class="p" x="1452.50" y="384.10" font-size="10" fill="#9b9b9b" text-anchor="start">2</text>
<text class="p" x="1525.55" y="358.10" font-size="10" fill="#9b9b9b" text-anchor="start">4</text>
<text class="p" x="1525.55" y="384.10" font-size="10" fill="#9b9b9b" text-anchor="start">3</text>
<text class="l" x="1468.00" y="345.40" font-size="6.5" fill="#9b9b9b" text-anchor="start" textLength="8.0" lengthAdjust="spacingAndGlyphs">K2</text>
<path d="M1384.40 296.30 L1448.30 296.30" fill="none" style="stroke:var(--gc,#5cae5c);stroke-width:var(--w,1.35px)" vector-effect="non-scaling-stroke"/>
<text class="l" x="1391.00" y="295.30" font-size="12" fill="#9b9b9b" text-anchor="start" textLength="29.3" lengthAdjust="spacingAndGlyphs">BTN1</text>
<line x1="1390.60" y1="292.80" x2="1390.60" y2="300.80" style="stroke:var(--xc,#7a7a7a);stroke-width:var(--w,0.9px)" vector-effect="non-scaling-stroke"/>
<path d="M1384.40 359.90 L1448.30 359.90" fill="none" style="stroke:var(--gc,#5cae5c);stroke-width:var(--w,1.35px)" vector-effect="non-scaling-stroke"/>
<text class="l" x="1391.00" y="358.90" font-size="12" fill="#9b9b9b" text-anchor="start" textLength="29.3" lengthAdjust="spacingAndGlyphs">BTN2</text>
<line x1="1390.60" y1="356.40" x2="1390.60" y2="364.40" style="stroke:var(--xc,#7a7a7a);stroke-width:var(--w,0.9px)" vector-effect="non-scaling-stroke"/>
<path d="M1539.00 322.30 L1577.20 322.30 L1577.20 398.90" fill="none" style="stroke:var(--gc,#5cae5c);stroke-width:var(--w,1.35px)" vector-effect="non-scaling-stroke"/>
<path d="M1539.00 386.00 L1577.20 386.00" fill="none" style="stroke:var(--gc,#5cae5c);stroke-width:var(--w,1.35px)" vector-effect="non-scaling-stroke"/>
<circle cx="1577.20" cy="386.00" r="3.1" style="fill:var(--gc,#5cae5c);r:var(--jr,3.1px)"/>
<line x1="1577.20" y1="398.90" x2="1577.20" y2="411.90" style="stroke:var(--pc,#b04a4a);stroke-width:var(--w,1.3px)" vector-effect="non-scaling-stroke"/>
<line x1="1566.60" y1="411.90" x2="1587.80" y2="411.90" style="stroke:var(--rc,#a33c3c);stroke-width:var(--w,2.6px)" vector-effect="non-scaling-stroke"/>
<text class="l" x="1577.20" y="425.20" font-size="12" fill="#9b9b9b" text-anchor="middle" textLength="26.0" lengthAdjust="spacingAndGlyphs">GND</text>
</g></defs>
<defs>
<linearGradient id="tabL" x1="0" y1="0" x2="0" y2="1"><stop offset="0" stop-color="#c9c9c9"/><stop offset="1" stop-color="#b3b3b3"/></linearGradient>
<linearGradient id="tabR" x1="0" y1="0" x2="0" y2="1"><stop offset="0" stop-color="#dadada"/><stop offset="1" stop-color="#cdcdcd"/></linearGradient>
<linearGradient id="blueBtn" x1="0" y1="0" x2="0" y2="1"><stop offset="0" stop-color="#76b0f3"/><stop offset="1" stop-color="#2a82ee"/></linearGradient>
</defs>
<rect x="0" y="0" width="1638" height="1024" fill="#e5e5e5"/>
<rect x="0" y="0" width="819" height="26" fill="url(#tabL)"/>
<rect x="819" y="0" width="819" height="26" fill="url(#tabR)"/>
<line x1="0.00" y1="0.50" x2="1638.00" y2="0.50" stroke="#9e9e9e" stroke-width="1"/>
<line x1="818.50" y1="0.00" x2="818.50" y2="26.00" stroke="#a2a2a2" stroke-width="1"/>
<line x1="0.00" y1="26.50" x2="1638.00" y2="26.50" stroke="#a6a6a6" stroke-width="1"/>
<text x="409.00" y="18.00" font-size="13.5" fill="#474747" text-anchor="middle" textLength="542" lengthAdjust="spacingAndGlyphs" font-weight="normal">Control Panel - /Users/oyvdahl/Documents/eagle/Alarm Clock - EAGLE 8.3.1 free [OFFLINE]</text>
<text x="1227.00" y="18.00" font-size="13.5" fill="#474747" text-anchor="middle" textLength="634" lengthAdjust="spacingAndGlyphs" font-weight="normal">1 Schematic - /Users/oyvdahl/Documents/eagle/Alarm Clock/alarm-clock.sch - EAGLE 8.3.1 free [OFFLINE]</text>
<line x1="0.00" y1="64.50" x2="1638.00" y2="64.50" stroke="#a9a9a9" stroke-width="1"/>
<line x1="0.00" y1="95.50" x2="1638.00" y2="95.50" stroke="#a9a9a9" stroke-width="1"/>
<line x1="70.00" y1="96.00" x2="70.00" y2="991.00" stroke="#9d9d9d" stroke-width="1.8"/>
<rect x="71" y="129" width="284" height="862" fill="#ffffff"/>
<rect x="337" y="129" width="18" height="862" fill="#f9f9f9"/>
<line x1="337.50" y1="129.00" x2="337.50" y2="991.00" stroke="#ececec" stroke-width="1"/>
<rect x="353" y="129" width="2" height="862" fill="#d9d9d9"/>
<line x1="70.00" y1="128.50" x2="355.00" y2="128.50" stroke="#c9c9c9" stroke-width="1"/>
<line x1="355.50" y1="96.00" x2="355.50" y2="991.00" stroke="#b4b4b4" stroke-width="1"/>
<rect x="356" y="129" width="1265" height="846" fill="#ffffff"/>
<rect x="1621" y="129" width="17" height="846" fill="#f7f7f7"/>
<line x1="1621.50" y1="129.00" x2="1621.50" y2="975.00" stroke="#e9e9e9" stroke-width="1"/>
<rect x="356" y="975" width="1265" height="16" fill="#f7f7f7"/>
<line x1="356.00" y1="974.50" x2="1621.00" y2="974.50" stroke="#e9e9e9" stroke-width="1"/>
<rect x="1622" y="975" width="16" height="16" fill="#e3e3e3"/>
<line x1="0.00" y1="991.00" x2="1638.00" y2="991.00" stroke="#8c8c8c" stroke-width="1.4"/>
<text x="6.00" y="1013.00" font-size="15" fill="#333333" text-anchor="start" textLength="541" lengthAdjust="spacingAndGlyphs" font-weight="normal">Left-click&amp;drag to define group (or left-click to start defining a group polygon)</text>
<text x="365.50" y="117.50" font-size="16" fill="#333333" text-anchor="start" textLength="150" lengthAdjust="spacingAndGlyphs" font-weight="normal">0.05 inch (8.06 -0.71)</text>
<line x1="526.50" y1="101.00" x2="526.50" y2="122.00" stroke="#9a9a9a" stroke-width="1.2"/>
<rect x="544.5" y="100.5" width="1080" height="22" rx="2" fill="#fff" stroke="#7ea6dc" stroke-width="1.6"/>
<path d="M1614 99.5 h16 a5 5 0 0 1 5 5 v14 a5 5 0 0 1 -5 5 h-16 z" fill="url(#blueBtn)"/>
<path d="M1619.5 108.5 l4.5 4.5 l4.5 -4.5" fill="none" stroke="#fff" stroke-width="1.8"/>
<line x1="549.50" y1="104.00" x2="549.50" y2="119.00" stroke="#222" stroke-width="1.2"/>
<circle cx="82.5" cy="112.3" r="6.5" fill="#3b3b3b"/>
<path d="M79.7 109.5 l5.6 5.6 M85.3 109.5 l-5.6 5.6" stroke="#fff" stroke-width="1.8"/>
<circle cx="103.2" cy="112.3" r="6.5" fill="#3b3b3b"/>
<rect x="99.8" y="110.8" width="5" height="4.5" fill="none" stroke="#fff" stroke-width="1.1"/><path d="M101.8 110.8 v-2 h5 v4.5 h-2" fill="none" stroke="#fff" stroke-width="1.1"/>
<text x="203.00" y="118.00" font-size="15.5" fill="#333333" text-anchor="middle" textLength="47" lengthAdjust="spacingAndGlyphs" font-weight="normal">Sheets</text>
<rect x="71" y="132" width="264" height="198" fill="#e4f0fc"/>
<rect x="190" y="333" width="23" height="17" fill="#cfcfcf"/>
<text x="201.50" y="347.00" font-size="14" fill="#222" text-anchor="middle" font-weight="normal">1</text>
<line x1="5.90" y1="32.00" x2="5.90" y2="59.00" stroke="#9b9b9b" stroke-width="1.2"/>
<line x1="10.70" y1="32.00" x2="10.70" y2="59.00" stroke="#9b9b9b" stroke-width="1.2"/>
<line x1="171.00" y1="32.00" x2="171.00" y2="59.00" stroke="#9b9b9b" stroke-width="1.2"/>
<line x1="311.00" y1="32.00" x2="311.00" y2="59.00" stroke="#9b9b9b" stroke-width="1.2"/>
<line x1="357.00" y1="32.00" x2="357.00" y2="59.00" stroke="#9b9b9b" stroke-width="1.2"/>
<line x1="442.00" y1="32.00" x2="442.00" y2="59.00" stroke="#9b9b9b" stroke-width="1.2"/>
<line x1="647.00" y1="32.00" x2="647.00" y2="59.00" stroke="#9b9b9b" stroke-width="1.2"/>
<line x1="732.00" y1="32.00" x2="732.00" y2="59.00" stroke="#9b9b9b" stroke-width="1.2"/>
<line x1="817.00" y1="32.00" x2="817.00" y2="59.00" stroke="#9b9b9b" stroke-width="1.2"/>
<line x1="823.00" y1="32.00" x2="823.00" y2="59.00" stroke="#9b9b9b" stroke-width="1.2"/>
<line x1="870.00" y1="32.00" x2="870.00" y2="59.00" stroke="#9b9b9b" stroke-width="1.2"/>
<line x1="874.20" y1="32.00" x2="874.20" y2="59.00" stroke="#9b9b9b" stroke-width="1.2"/>
<path d="M24 36.7 h8 a2.5 2.5 0 0 1 2.5 2.5 v12 a2.5 2.5 0 0 1 -2.5 2.5 h-6 l-3.5 -3.5 v-11 a2.5 2.5 0 0 1 1.5 -2.5z" fill="#fafafa" stroke="#6b6b6b" stroke-width="1"/>
<path d="M26.4 43.8 h6 M30.5 40.5 l3.8 3.3 l-3.8 3.3" fill="none" stroke="#2d2d2d" stroke-width="2.2"/>
<path d="M36.5 52.3 L45.2 52.3 L40.85 60.5 Z" fill="#5a5a5a"/>
<rect x="51.4" y="31" width="34.6" height="29.8" rx="2.5" fill="#c9c9c9"/>
<rect x="59.4" y="36.4" width="17.5" height="17.6" rx="2.8" fill="#383838"/>
<rect x="62.4" y="39.1" width="11.5" height="5.6" fill="#c6c6c6"/>
<rect x="62.4" y="47.8" width="11.5" height="6.3" fill="#acacac"/>
<rect x="71" y="49" width="1.9" height="4" rx="0.9" fill="#f4f4f4"/>
<rect x="104.8" y="37" width="7" height="4.8" fill="#8a8a8a"/>
<rect x="99.2" y="43.8" width="17.4" height="7.6" rx="2" fill="#383838"/>
<rect x="104" y="52" width="9" height="2.6" rx="1" fill="#383838"/>
<path d="M143 40 v-2.2 h11.5 a1.5 1.5 0 0 1 1.5 1.5 v9 h-1.8" fill="none" stroke="#383838" stroke-width="1.6"/>
<rect x="138.8" y="40.8" width="15" height="11.4" rx="2" fill="#383838"/>
<circle cx="146.4" cy="46.8" r="3.9" fill="#3d8ef0"/>
<circle cx="140.8" cy="42.6" r="0.8" fill="#fff"/>
<rect x="184.1" y="36.3" width="18.5" height="8.8" fill="#9a9a9a"/>
<rect x="184.1" y="45.1" width="18.5" height="9.6" fill="#2f9a3a"/>
<text x="193.30" y="44.20" font-size="8.5" fill="#ffffff" text-anchor="middle" textLength="16" lengthAdjust="spacingAndGlyphs" font-weight="bold">SCH</text>
<text x="193.30" y="53.50" font-size="8.5" fill="#ffffff" text-anchor="middle" textLength="16" lengthAdjust="spacingAndGlyphs" font-weight="bold">BRD</text>
<rect x="220" y="33.3" width="82" height="22.5" rx="4" fill="#ffffff" stroke="#c4c4c4" stroke-width="0.8"/>
<path d="M283 33.1 h15 a4 4 0 0 1 4 4 v14.7 a4 4 0 0 1 -4 4 h-15 z" fill="url(#blueBtn)"/>
<path d="M289.5 42 l4 -3.8 l4 3.8 M289.5 46.5 l4 3.8 l4 -3.8" fill="none" stroke="#fff" stroke-width="1.5"/>
<text x="228.40" y="50.00" font-size="16" fill="#111111" text-anchor="start" textLength="17.5" lengthAdjust="spacingAndGlyphs" font-weight="normal">1/1</text>
<rect x="324.4" y="38.1" width="5.2" height="14.7" rx="1" fill="#3c3c3c"/>
<rect x="326.2" y="39.6" width="1.6" height="3" fill="#cfcfcf"/>
<rect x="325.7" y="50.2" width="2.6" height="0.9" fill="#cfcfcf"/>
<rect x="330.5" y="38.1" width="5.2" height="14.7" rx="1" fill="#3c3c3c"/>
<rect x="332.3" y="39.6" width="1.6" height="3" fill="#cfcfcf"/>
<rect x="331.8" y="50.2" width="2.6" height="0.9" fill="#cfcfcf"/>
<rect x="336.6" y="38.1" width="5.2" height="14.7" rx="1" fill="#3c3c3c"/>
<rect x="338.40000000000003" y="39.6" width="1.6" height="3" fill="#cfcfcf"/>
<rect x="337.90000000000003" y="50.2" width="2.6" height="0.9" fill="#cfcfcf"/>
<rect x="369.9" y="36.2" width="17.8" height="17.8" fill="#3b7fcb"/>
<text x="378.80" y="48.60" font-size="9" fill="#e8f0fb" text-anchor="middle" textLength="14" lengthAdjust="spacingAndGlyphs" font-weight="normal">SCR</text>
<path d="M387.4 52.8 L395.9 52.8 L391.65 60.8 Z" fill="#5a5a5a"/>
<rect x="409.6" y="36.2" width="17.9" height="17.8" fill="#f2a12a"/>
<text x="418.50" y="48.60" font-size="9" fill="#fdf0dc" text-anchor="middle" textLength="14" lengthAdjust="spacingAndGlyphs" font-weight="normal">ULP</text>
<path d="M427.2 52.8 L435.7 52.8 L431.45 60.8 Z" fill="#5a5a5a"/>
<circle cx="462.6" cy="44.2" r="6.3" fill="none" stroke="#383838" stroke-width="1.8"/>
<path d="M467.20000000000005 48.800000000000004 l4.2 4.2" stroke="#383838" stroke-width="3.2" stroke-linecap="round"/>
<rect x="459.0" y="41.900000000000006" width="7.2" height="4.6" fill="#383838"/>
<circle cx="502.7" cy="44.2" r="6.3" fill="none" stroke="#383838" stroke-width="1.8"/>
<path d="M507.3 48.800000000000004 l4.2 4.2" stroke="#383838" stroke-width="3.2" stroke-linecap="round"/>
<path d="M499.2 44.2 h7 M502.7 40.7 v7" stroke="#383838" stroke-width="1.6"/>
<circle cx="542.6" cy="44.2" r="6.3" fill="none" stroke="#383838" stroke-width="1.8"/>
<path d="M547.2 48.800000000000004 l4.2 4.2" stroke="#383838" stroke-width="3.2" stroke-linecap="round"/>
<path d="M539.1 44.2 h7" stroke="#383838" stroke-width="1.6"/>
<circle cx="582.6" cy="44.2" r="6.3" fill="none" stroke="#383838" stroke-width="1.8"/>
<path d="M587.2 48.800000000000004 l4.2 4.2" stroke="#383838" stroke-width="3.2" stroke-linecap="round"/>
<path d="M579.1 42.7 h7 M579.1 45.7 h7" stroke="#383838" stroke-width="1.4"/>
<circle cx="622.4" cy="44.2" r="6.3" fill="none" stroke="#383838" stroke-width="1.8"/>
<path d="M627.0 48.800000000000004 l4.2 4.2" stroke="#383838" stroke-width="3.2" stroke-linecap="round"/>
<rect x="618.4" y="41.6" width="8" height="5.2" fill="none" stroke="#383838" stroke-width="0.9"/><rect x="619.6" y="42.6" width="3" height="2" fill="#383838"/>
<path d="M632 53 L640.5 53 L636.25 61 Z" fill="#5a5a5a"/>
<path d="M676 50.5 c-1 -6 -5 -8.5 -11 -6" fill="none" stroke="#a9a9a9" stroke-width="2.6"/><path d="M659.8 45.5 l6.8 -5 l0.8 8.8 z" fill="#a9a9a9"/>
<path d="M701 50.5 c1 -6 5 -8.5 11 -6" fill="none" stroke="#a9a9a9" stroke-width="2.6"/><path d="M717.4 45.5 l-6.8 -5 l-0.8 8.8 z" fill="#a9a9a9"/>
<circle cx="754.1" cy="45.2" r="8.8" fill="#e0203f"/>
<rect x="748.6" y="43.9" width="11" height="2.8" fill="#fff"/>
<circle cx="794.1" cy="40.1" r="3.7" fill="#ababab"/><circle cx="794.1" cy="50.1" r="3.7" fill="#5a5a5a"/>
<circle cx="845" cy="45.6" r="8.9" fill="#383838"/>
<text x="845.30" y="51.60" font-size="15.5" fill="#ffffff" text-anchor="middle" font-weight="bold">?</text>
<linearGradient id="dlg" x1="0" y1="0" x2="0" y2="1"><stop offset="0" stop-color="#f2f2f2"/><stop offset="1" stop-color="#d6d6d6"/></linearGradient>
<rect x="887.8" y="33.6" width="61.4" height="24.6" rx="2.2" fill="url(#dlg)" stroke="#4a4a4a" stroke-width="1.1"/>
<text x="911.30" y="47.50" font-size="10.5" fill="#dc1f40" text-anchor="middle" textLength="30.5" lengthAdjust="spacingAndGlyphs" font-weight="bold">design</text>
<text x="929.30" y="55.80" font-size="10" fill="#1e1e1e" text-anchor="middle" textLength="17" lengthAdjust="spacingAndGlyphs" font-weight="bold">link</text>
<rect x="924.7" y="48.6" width="1.6" height="7.2" fill="#dc1f40"/>
<circle cx="914" cy="37.6" r="1.3" fill="#dc1f40"/>
<path d="M952.3 47.5 L961 47.5 L956.65 55.7 Z" fill="#5a5a5a"/>
<line x1="6.20" y1="69.20" x2="6.20" y2="91.00" stroke="#9b9b9b" stroke-width="1.2"/>
<line x1="10.70" y1="69.20" x2="10.70" y2="91.00" stroke="#9b9b9b" stroke-width="1.2"/>
<rect x="20.3" y="71.5" width="16.3" height="16" fill="#f4f4f4" stroke="#383838" stroke-width="1.8"/>
<line x1="25.73" y1="71.50" x2="25.73" y2="87.50" stroke="#383838" stroke-width="1.6"/>
<line x1="20.30" y1="76.83" x2="36.60" y2="76.83" stroke="#383838" stroke-width="1.6"/>
<line x1="31.17" y1="71.50" x2="31.17" y2="87.50" stroke="#383838" stroke-width="1.6"/>
<line x1="20.30" y1="82.17" x2="36.60" y2="82.17" stroke="#383838" stroke-width="1.6"/>
<path d="M37 86.2 L45 86.2 L41.0 94.8 Z" fill="#5a5a5a"/>
<line x1="13.50" y1="102.80" x2="56.60" y2="102.80" stroke="#9b9b9b" stroke-width="1.1"/>
<line x1="13.50" y1="107.60" x2="56.60" y2="107.60" stroke="#9b9b9b" stroke-width="1.1"/>
<line x1="4.60" y1="185.00" x2="66.00" y2="185.00" stroke="#9b9b9b" stroke-width="1.2"/>
<line x1="4.70" y1="562.70" x2="65.90" y2="562.70" stroke="#9b9b9b" stroke-width="1.2"/>
<line x1="4.70" y1="808.00" x2="65.90" y2="808.00" stroke="#9b9b9b" stroke-width="1.2"/>
<g transform="translate(17 127.5)"><circle r="9.2" fill="#383838"/><rect x="-1.6" y="-3" width="3.2" height="7.5" fill="#fff"/><rect x="-3" y="3.5" width="6" height="1.5" fill="#fff"/><rect x="-3" y="-3" width="2" height="1.3" fill="#fff"/><circle cy="-5.8" r="1.7" fill="#fff"/></g>
<g transform="translate(52.2 127.5)"><path d="M-8.6 0 C-5 -6.5 5 -6.5 8.6 0 C5 6.5 -5 6.5 -8.6 0 Z" fill="#383838"/><circle r="3" fill="#fff"/><circle r="1.6" fill="#383838"/></g>
<g transform="translate(17 160)"><rect x="-9.2" y="-8.8" width="9.3" height="9.3" fill="#3a7dd0"/><path d="M-5 1.8 h5.5 v-5.5" stroke="#e0203f" stroke-width="2.4" fill="none"/><path d="M-0.5 6.3 h5.5 v-5.5" stroke="#2fa040" stroke-width="2.4" fill="none"/></g>
<path d="M23.8 166.5 L31.6 166.5 L27.700000000000003 174.5 Z" fill="#5a5a5a"/>
<g transform="translate(52.2 160)"><path d="M-4.3 -7.1 v15.4 M-7.6 5.2 h15.7" stroke="#9a9a9a" stroke-width="1.3"/><path d="M-0.8 -1 h5.6 M2 -3.8 v5.6" stroke="#383838" stroke-width="1.8"/></g>
<rect x="2.2" y="194.7" width="30.8" height="28" rx="3" fill="#cdcdcd"/>
<g transform="translate(17 208)"><rect x="-8.1" y="-8.4" width="8.9" height="8.5" fill="none" stroke="#383838" stroke-width="1.1" stroke-dasharray="1.3 0.9"/><path d="M1.8 -1.6 l0 9.2 l2.2 -2 l2 4 l1.6 -0.8 l-2 -4 l3 -0.2 z" fill="#111"/></g>
<g transform="translate(52.2 208)"><path d="M0 -6.5 v3 M0 3.5 v3 M-6.5 0 h3 M3.5 0 h3" stroke="#383838" stroke-width="1.2"/><path d="M0 -9 l-2.8 3 h5.6z M0 9 l-2.8 -3 h5.6z M-9 0 l3 -2.8 v5.6z M9 0 l-3 -2.8 v5.6z" fill="#383838"/></g>
<g transform="translate(17 241.5)"><path d="M-2.5 -4.8 L-2.5 4 L-8.8 4 Z M2.5 -4.8 L2.5 4 L8.8 4 Z" fill="#383838" stroke="#383838" stroke-width="0.8" stroke-linejoin="round"/><path d="M0 -8.5 v16.5" stroke="#9a9a9a" stroke-width="1.2"/></g>
<g transform="translate(52.2 241.5)"><path d="M1.1 6.9 A7.4 7.4 0 1 0 -6.6 -2.3" fill="none" stroke="#383838" stroke-width="1.9"/><path d="M-9.2 -2.8 L-2.8 -2.2 L-7.6 2.3 Z" fill="#383838"/></g>
<g transform="translate(17 274.2)"><rect x="-5" y="-9" width="9.5" height="12.5" rx="1.5" fill="#fafafa" stroke="#383838" stroke-width="1.2"/><rect x="-7.5" y="-5.5" width="10" height="13.5" rx="1.5" fill="#fafafa" stroke="#383838" stroke-width="1.2"/><rect x="-5" y="0" width="5" height="4" fill="#aaa"/></g>
<g transform="translate(52.2 274.2)"><rect x="-8" y="-9" width="11" height="14" rx="1.5" fill="#383838"/><rect x="-2" y="-3" width="9.5" height="11.5" rx="1.5" fill="#fafafa" stroke="#383838" stroke-width="1.2"/><rect x="0.5" y="2" width="4.5" height="4" fill="#aaa"/></g>
<g transform="translate(17 307)"><rect x="-8" y="-6" width="16" height="2.2" fill="#383838"/><rect x="-3" y="-8.5" width="6" height="2.5" fill="none" stroke="#383838" stroke-width="1.1"/><path d="M-6.5 -3 h13 l-1 11.5 h-11 z" fill="#383838"/><path d="M-2.8 -1 v7 M0 -1 v7 M2.8 -1 v7" stroke="#ddd" stroke-width="1.2"/></g>
<g transform="translate(52.2 307.5)"><path d="M-7 6.4 L1.2 -1.6" stroke="#383838" stroke-width="3" stroke-linecap="round"/><path d="M7.4 -3.6 A3.9 3.9 0 1 1 4.2 -8" fill="none" stroke="#383838" stroke-width="3.2"/><circle cx="-6.6" cy="6" r="0.8" fill="#ddd"/></g>
<g transform="translate(17 340)"><rect x="-9" y="-9" width="11.5" height="11.5" fill="#d4233a"/><rect x="-3" y="-3" width="12" height="9.5" fill="#383838"/><rect x="-3" y="6.5" width="12" height="3" fill="#2f9a3a"/><path d="M3 -1 v6 M0 2 h6" stroke="#fff" stroke-width="1.8"/></g>
<g transform="translate(52.2 340)"><path d="M-9 -3 h5 M-9 4 h5" stroke="#9a9a9a" stroke-width="1.2"/><path d="M-4 -8.5 h4 a8.5 8.5 0 0 1 0 17 h-4" fill="none" stroke="#9a9a9a" stroke-width="1.1"/><rect x="-4.5" y="-4" width="11.5" height="9" fill="#383838"/><path d="M1.2 -2.5 v6 M-1.8 0.5 h6" stroke="#fff" stroke-width="1.8"/></g>
<path d="M58.5 347 L65 347 L61.75 354 Z" fill="#5a5a5a"/>
<g transform="translate(17 373)"><path d="M-2 -6 A6 6 0 0 0 -2 6" fill="none" stroke="#383838" stroke-width="1.8"/><path d="M-1.5 -9 l3.5 3 l-3.5 2.5 z M-1.5 9 l3.5 -3 l-3.5 -2.5 z" fill="#383838"/><path d="M2.5 -5.5 h4 M2.5 0 h4 M2.5 5.5 h4" stroke="#8a8a8a" stroke-width="1.3"/><path d="M7.5 -8.5 v17" stroke="#aaa" stroke-width="2"/></g>
<g transform="translate(52.2 373)"><path d="M-6 -1 A6.5 6.5 0 0 1 6 -3" fill="none" stroke="#383838" stroke-width="1.8"/><path d="M7.5 -0.5 l-4.5 -1 l3 -3.5 z" fill="#383838"/><rect x="-8.5" y="0" width="6.5" height="6.5" fill="#383838"/><circle cx="2.5" cy="3" r="3.6" fill="#9a9a9a"/></g>
<path d="M58.5 377.5 L65 377.5 L61.75 385 Z" fill="#5a5a5a"/>
<g transform="translate(17 406)"><path d="M-2 -6 A6 6 0 0 0 -2 6" fill="none" stroke="#383838" stroke-width="1.8"/><path d="M-1.5 -9 l3.5 3 l-3.5 2.5 z M-1.5 9 l3.5 -3 l-3.5 -2.5 z" fill="#383838"/><path d="M3.5 -8 a3.6 3.6 0 0 1 0 7.2 z" fill="#222"/><circle cx="3.5" cy="3.8" r="3.5" fill="#9a9a9a"/><path d="M0.5 -4.4 h3" stroke="#444" stroke-width="1"/></g>
<g transform="translate(17 439)"><text x="-7.5" y="-2" font-size="8" fill="#383838" textLength="12" lengthAdjust="spacingAndGlyphs">R2</text><rect x="-7.5" y="-0.5" width="12.5" height="1.4" fill="#383838"/><text x="-7.5" y="8" font-size="8" fill="#9a9a9a" textLength="13" lengthAdjust="spacingAndGlyphs">10k</text></g>
<g transform="translate(52.2 439)"><text x="-7.5" y="-2" font-size="8" fill="#9a9a9a" textLength="12" lengthAdjust="spacingAndGlyphs">R2</text><rect x="-7.5" y="-0.5" width="12.5" height="1.4" fill="#383838"/><text x="-7.5" y="8" font-size="8" fill="#383838" textLength="13" lengthAdjust="spacingAndGlyphs">10k</text></g>
<path d="M58.5 441.5 L65 441.5 L61.75 449 Z" fill="#5a5a5a"/>
<g transform="translate(17 472)"><path d="M-8.5 -7 h4.5 M-6.2 -9.2 v4.5 M-8.5 5 h4.5 M-6.2 2.8 v4.5" stroke="#383838" stroke-width="1.4"/><rect x="-2.5" y="-4.5" width="11.5" height="8.5" rx="1" fill="#a8a8a8"/></g>
<g transform="translate(52.2 472)"><path d="M-9.2 -9.3 h19 v4 h-2 a9 9 0 0 0 -9 9 v5.5 h-8 z" fill="#a8a8a8"/><path d="M-4.5 9.5 v-4.5 a9 9 0 0 1 9 -9 h5.5" fill="none" stroke="#383838" stroke-width="1.6"/></g>
<g transform="translate(17 506)"><path d="M-8.5 7.5 l2 -12.5 l15 -2.5 v15 z" fill="#a8a8a8"/><path d="M-8.5 7.5 l2 -12.5 l15 -2.5" fill="none" stroke="#383838" stroke-width="1.6"/></g>
<g transform="translate(52.2 506)"><path d="M-7.5 -4 h4 M2 -4 h5" stroke="#aaa" stroke-width="1.1"/><path d="M-3 0 h6 M0 -3 v6" stroke="#383838" stroke-width="1.6"/></g>
<g transform="translate(17 538)"><path d="M-9 0 h3 M-9 -2.5 h3 M-9 2.5 h3" stroke="#111" stroke-width="1.1"/><path d="M-6.5 -4.5 a4.5 4.5 0 0 1 0 9 z" fill="#111"/><path d="M-2 0 h3" stroke="#111" stroke-width="1.2"/><path d="M2 -4.5 a4.5 4.5 0 0 1 0 9 z" fill="#aaa"/><path d="M0 -2.5 h2 M0 2.5 h2" stroke="#aaa" stroke-width="1"/><path d="M6 0 h3" stroke="#aaa" stroke-width="1"/></g>
<g transform="translate(52.2 538)"><path d="M-8 -4 h4 M-8 0 h4 M-8 4 h4 M4 -4 h4 M4 0 h4 M4 4 h4" stroke="#383838" stroke-width="1.2"/><path d="M-2 -7 L2 7" stroke="#8a8a8a" stroke-width="1.3"/></g>
<g transform="translate(17 586)"><path d="M-8.5 8 h13.5" stroke="#111" stroke-width="2"/><path d="M5 5 l2.8 -10.5" stroke="#9a9a9a" stroke-width="3.2" stroke-linecap="round"/></g>
<g transform="translate(52.2 586)"><text x="0" y="7.5" font-size="20" style="font-family:'Liberation Serif'" fill="#111" text-anchor="middle">T</text></g>
<g transform="translate(17 619)"><circle r="7" fill="none" stroke="#383838" stroke-width="1.4"/></g>
<g transform="translate(52.2 619)"><path d="M-8 0.5 a10 10 0 0 1 16 0" fill="none" stroke="#383838" stroke-width="2.1"/></g>
<g transform="translate(17 652)"><rect x="-6.8" y="-8" width="13.6" height="16" fill="#383838"/></g>
<g transform="translate(52.2 652)"><path d="M-6.5 8 v-8.5 l6 -7.5 h7 v16 z" fill="none" stroke="#383838" stroke-width="1.1"/></g>
<g transform="translate(17 685)"><path d="M-8.5 5 h15.5 v-9" fill="none" stroke="#3a7dd0" stroke-width="2.6" stroke-linecap="round"/></g>
<g transform="translate(52.2 685)"><path d="M-8.5 5 h15.5 v-9" fill="none" stroke="#2fa040" stroke-width="1.7"/></g>
<g transform="translate(17 718)"><path d="M-8.5 0 h17 M0 -8.5 v17" stroke="#7a7a7a" stroke-width="1.2"/><circle r="3.9" fill="#2f9a3a"/></g>
<g transform="translate(52.2 718)"><path d="M-9 -0.5 l3.5 5 h12" fill="none" stroke="#2fa040" stroke-width="1.6"/><text x="1" y="1.5" font-size="8.5" fill="#383838" text-anchor="middle" textLength="11" lengthAdjust="spacingAndGlyphs">AB</text></g>
<g transform="translate(17 751)"><path d="M-9 -4 h5 M-9 3.5 h5" stroke="#9a9a9a" stroke-width="1.1"/><path d="M-4 -8.5 h2 a8.2 8.2 0 0 1 0 16.5 h-2 z" fill="none" stroke="#9a9a9a" stroke-width="1"/><rect x="-3.1" y="-4.4" width="11.7" height="8.4" fill="#383838"/><text x="2.7" y="3.4" font-size="8.5" fill="#fff" text-anchor="middle" textLength="9.5" lengthAdjust="spacingAndGlyphs" font-weight="bold">AT</text></g>
<g transform="translate(52.2 751)"><path d="M-8.5 -5 v10 M8.5 -5 v10" stroke="#9a9a9a" stroke-width="1"/><path d="M-5 0 h10" stroke="#222" stroke-width="1.8"/><path d="M-7.5 0 l4 -3.5 v7 z M7.5 0 l-4 -3.5 v7 z" fill="#222"/></g>
<g transform="translate(17 783.4)"><rect x="-4.6" y="-7.8" width="9.4" height="16.4" fill="none" stroke="#9b4ba8" stroke-width="1.3"/><path d="M-8.2 -3.6 h3.6 M-8.2 4.5 h3.6 M4.8 4.5 h3.4" stroke="#222" stroke-width="1.7"/></g>
<g transform="translate(52.2 783.4)"><rect x="-5" y="-8" width="9.6" height="16.8" fill="none" stroke="#444" stroke-width="1.3"/><path d="M-8.2 -3.6 h3.2 M-8.2 4.5 h3.2 M4.6 4.5 h3.4" stroke="#9b4ba8" stroke-width="1.7"/></g>
<g transform="translate(17 832)"><text x="-1.7" y="-1.7" font-size="10" fill="#383838" text-anchor="middle" textLength="14.5" lengthAdjust="spacingAndGlyphs">ERC</text><path d="M-3.1 3.4 L0.6 7 L8.6 -0.5" fill="none" stroke="#2fa040" stroke-width="2.4"/></g>
<g transform="translate(52.2 832)"><path d="M0 -9 L9.5 8 H-9.5 Z" fill="#f5c518" stroke="#f5c518" stroke-width="1" stroke-linejoin="round"/><rect x="-1" y="-4" width="2" height="7" fill="#222"/><circle cy="5.5" r="1.2" fill="#222"/></g>
<path d="M1602.3 998.3 L1596.1 1008.2 L1603 1008.8 L1603.3 1015.4 L1609.6 1005.4 L1603 1004.6 Z" fill="#79b83a" stroke="#79b83a" stroke-width="0.8" stroke-linejoin="round"/>
<g clip-path="url(#cv)"><use href="#sch"/></g>
<g clip-path="url(#th)"><g class="thumb" transform="translate(-9.5 111.6) scale(0.215)"><use href="#sch"/><g fill="#868686"><rect x="534.2" y="272.8" width="13.0" height="31.4"/><rect x="544.4" y="351.8" width="9.8" height="16.4"/><rect x="563.4" y="349.8" width="9.8" height="18.4"/><rect x="613.8" y="358.0" width="12.4" height="9.1"/><rect x="747.0" y="381.7" width="18.4" height="12.5"/><rect x="953.2" y="382.1" width="134.8" height="12.5"/><rect x="632.3" y="535.3" width="29.9" height="12.7"/><rect x="662.8" y="532.8" width="14.4" height="9.4"/><rect x="663.8" y="550.8" width="14.4" height="9.4"/><rect x="574.8" y="558.8" width="11.4" height="9.4"/><rect x="572.8" y="579.4" width="20.4" height="9.8"/><rect x="573.8" y="583.3" width="13.4" height="9.4"/><rect x="572.8" y="602.4" width="20.4" height="9.8"/><rect x="444.2" y="472.8" width="13.0" height="29.9"/><rect x="444.2" y="577.3" width="13.0" height="102.4"/><rect x="443.2" y="698.9" width="13.0" height="34.8"/><rect x="478.0" y="803.2" width="30.4" height="13.0"/><rect x="382.3" y="682.3" width="30.4" height="13.0"/><rect x="382.9" y="649.8" width="9.8" height="13.4"/><rect x="402.9" y="644.8" width="9.8" height="17.4"/><rect x="664.6" y="816.0" width="30.4" height="13.0"/><rect x="1241.4" y="432.5" width="30.4" height="13.0"/><rect x="1093.8" y="390.8" width="18.4" height="9.4"/><rect x="1093.8" y="410.8" width="22.4" height="9.4"/><rect x="1150.8" y="378.8" width="21.4" height="9.4"/><rect x="1196.8" y="378.8" width="62.4" height="9.4"/><rect x="1048.8" y="406.7" width="34.4" height="13.0"/><rect x="1048.8" y="419.5" width="34.4" height="13.0"/><rect x="1054.8" y="586.0" width="39.4" height="13.0"/><rect x="1054.8" y="598.7" width="39.4" height="13.0"/><rect x="1054.8" y="611.5" width="39.4" height="13.0"/><rect x="1054.8" y="624.3" width="39.4" height="13.0"/><rect x="1075.0" y="678.4" width="21.9" height="9.8"/><rect x="1075.0" y="659.8" width="13.4" height="9.4"/><rect x="1100.5" y="674.3" width="13.4" height="9.4"/><rect x="1100.6" y="691.2" width="21.9" height="9.8"/><rect x="1126.1" y="687.1" width="13.4" height="9.4"/><rect x="1126.2" y="704.0" width="21.9" height="9.8"/><rect x="1151.7" y="699.9" width="13.4" height="9.4"/><rect x="1151.7" y="716.8" width="21.9" height="9.8"/><rect x="1177.2" y="712.7" width="13.4" height="9.4"/><rect x="1177.3" y="729.6" width="21.9" height="9.8"/><rect x="1202.8" y="725.5" width="13.4" height="9.4"/><rect x="1202.9" y="742.4" width="21.9" height="9.8"/><rect x="1228.4" y="738.3" width="13.4" height="9.4"/><rect x="1228.5" y="755.1" width="21.9" height="9.8"/><rect x="1254.0" y="751.0" width="17.4" height="9.4"/><rect x="1254.1" y="767.9" width="21.9" height="9.8"/><rect x="1381.8" y="566.7" width="38.9" height="13.0"/><rect x="1450.2" y="545.3" width="13.0" height="40.4"/><rect x="1463.0" y="545.3" width="13.0" height="40.4"/><rect x="1486.2" y="697.8" width="13.0" height="39.4"/><rect x="1365.8" y="590.5" width="18.7" height="12.5"/><rect x="1491.8" y="685.7" width="81.4" height="12.5"/><rect x="1465.8" y="274.9" width="12.4" height="9.1"/><rect x="1465.8" y="338.5" width="12.4" height="9.1"/><rect x="1388.8" y="284.5" width="33.7" height="13.0"/><rect x="1388.8" y="348.1" width="33.7" height="13.0"/><rect x="1562.0" y="414.4" width="30.4" height="13.0"/></g></g></g>
</svg></body></html>
